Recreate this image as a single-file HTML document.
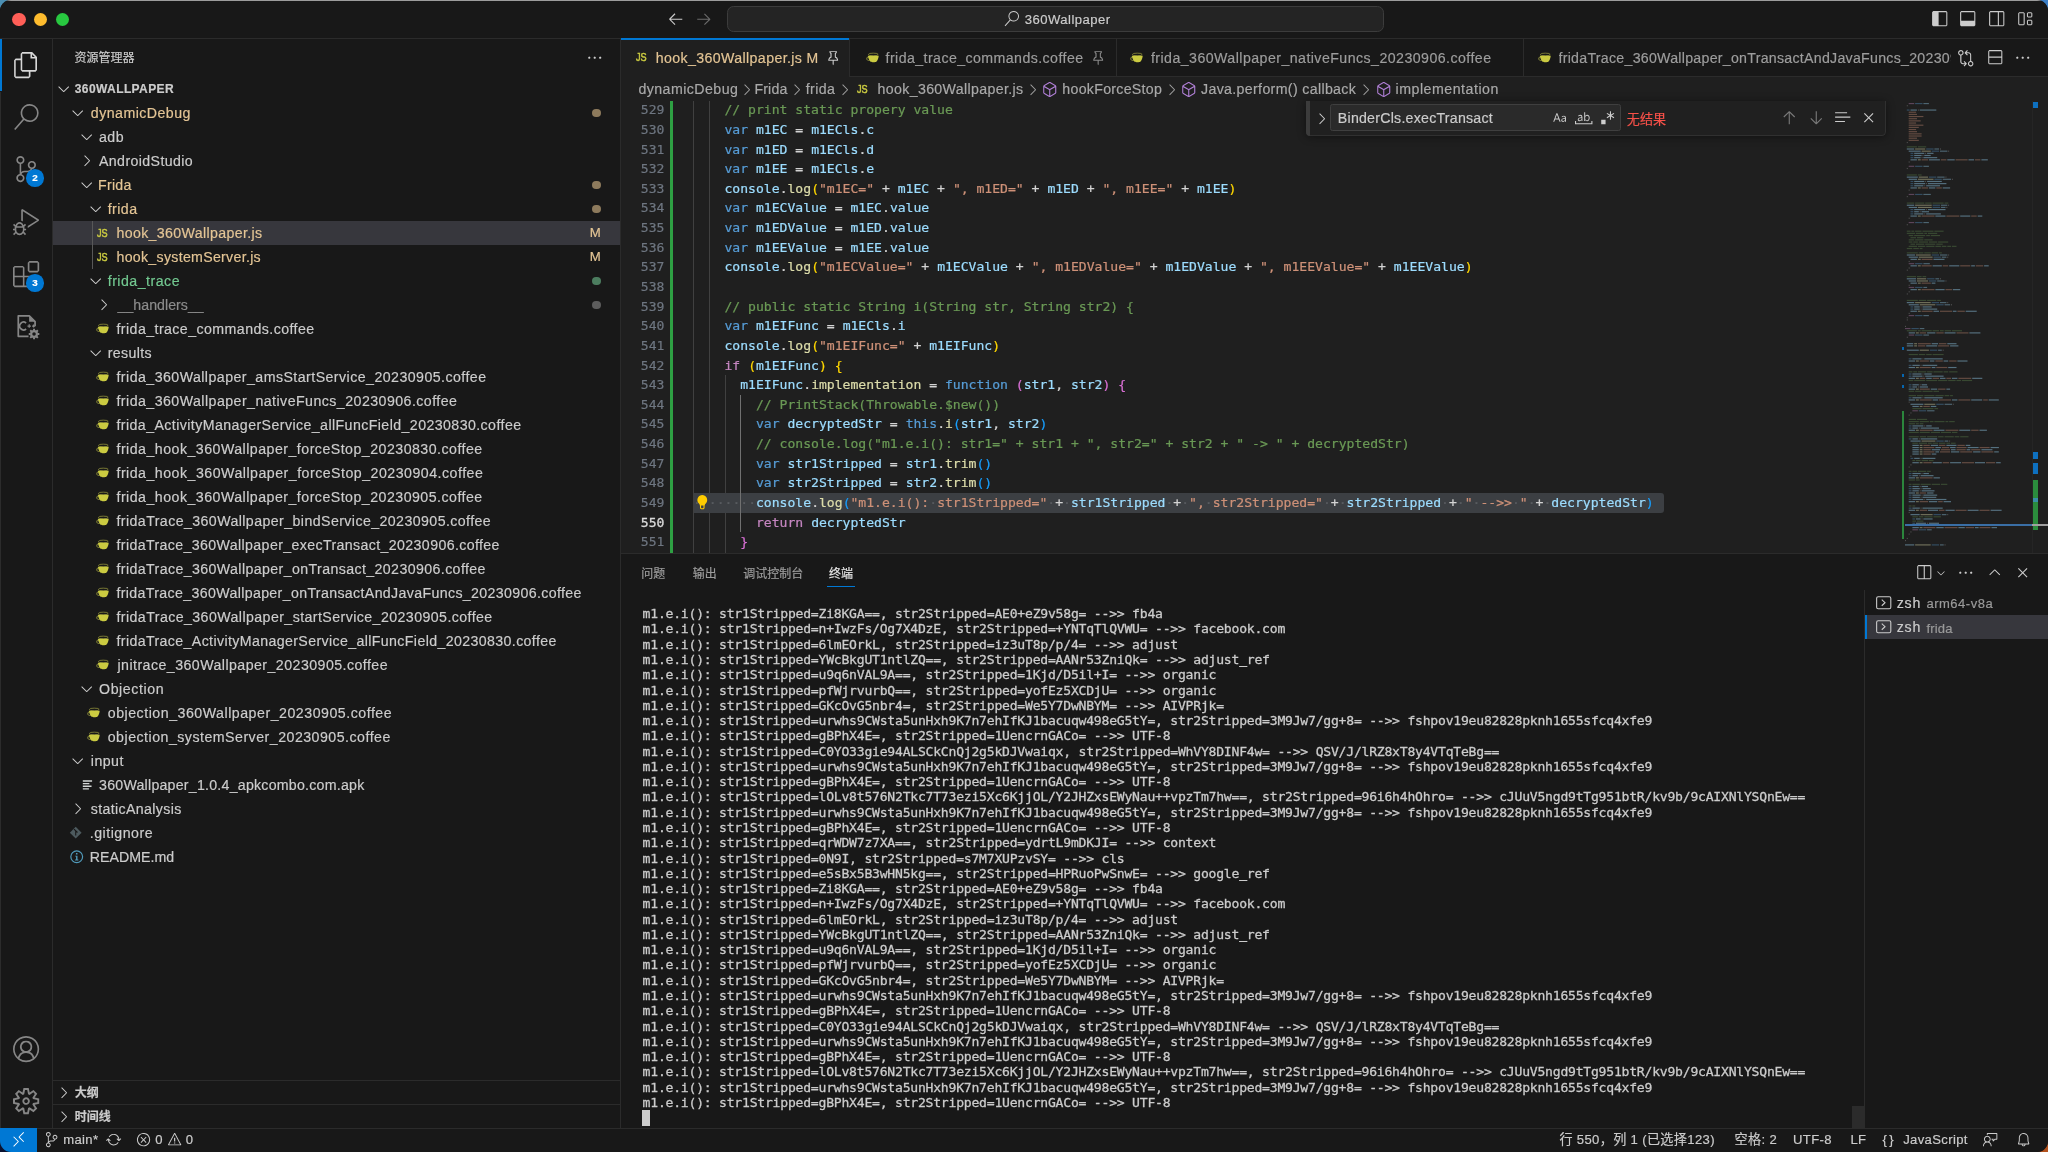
<!DOCTYPE html>
<html lang="zh-CN"><head><meta charset="utf-8"><title>hook_360Wallpaper.js — 360Wallpaper</title>
<style>
*{box-sizing:border-box;margin:0;padding:0}
html,body{width:2048px;height:1152px;overflow:hidden;background:#181818}
body{font-family:"Liberation Sans","Noto Sans CJK SC",sans-serif;font-size:14.18px;color:#ccc;
  -webkit-font-smoothing:antialiased;position:relative}
#win{will-change:transform;position:absolute;left:0;top:0;width:2048px;height:1152px;background:#181818;overflow:hidden;border-radius:11px}
.b,.t,.ic,.r{position:absolute}
.t{white-space:pre;letter-spacing:.36px;-webkit-text-stroke:.18px}
.ic{display:block;overflow:visible}
.cjk{font-family:"Noto Sans CJK SC","Liberation Sans",sans-serif;letter-spacing:0}
.bold{font-weight:700}
.mono{font-family:"DejaVu Sans Mono","Liberation Mono",monospace;letter-spacing:0}
.jsi{font-weight:400;letter-spacing:-.2px;font-family:"Liberation Sans",sans-serif;-webkit-text-stroke:.55px;transform:scaleX(.8);transform-origin:0 50%}
.corner{position:absolute;width:14px;height:14px}
/* code tokens */
.c{color:#6a9955}.k{color:#569cd6}.v{color:#9cdcfe}.f{color:#dcdcaa}.s{color:#ce9178}.p{color:#d4d4d4}
.kc{color:#c586c0}.b1{color:#ffd700}.b2{color:#da70d6}.b3{color:#179fff}.ws{color:#585b5f}
.ln{-webkit-text-stroke:.18px;position:absolute;left:621px;width:43.4px;text-align:right;color:#6e7681;font-family:"DejaVu Sans Mono","Liberation Mono",monospace;font-size:13.09px;line-height:19.636px;height:19.636px}
.cl{position:absolute;left:693px;-webkit-text-stroke:.22px;white-space:pre;font-family:"DejaVu Sans Mono","Liberation Mono",monospace;font-size:13.09px;line-height:19.636px;height:19.636px;color:#d4d4d4}
.tl{position:absolute;left:642.6px;-webkit-text-stroke:.28px #ccc;white-space:pre;font-family:"DejaVu Sans Mono","Liberation Mono",monospace;font-size:13.09px;letter-spacing:-.2255px;line-height:15.273px;height:15.273px;color:#ccc}
</style></head>
<body>
<div class="corner" style="left:0;top:0;background:#4b8fb3"></div><div class="corner" style="right:0;top:0;background:#3c7fc6"></div><div class="corner" style="left:0;bottom:0;background:#0b1230"></div><div class="corner" style="right:0;bottom:0;background:#b4521d"></div>
<div id="win">
<!-- title bar -->
<div class="b" style="left:0.00px;top:0.00px;width:2048.00px;height:38.00px;background:#181818;"></div>
<div class="b" style="left:0.00px;top:0.00px;width:2048.00px;height:1.00px;background:#9c9c9c;"></div>
<div class="b" style="left:0.00px;top:37.60px;width:2048.00px;height:1.10px;background:#2b2b2b;"></div>
<div class="b" style="left:12.00px;top:12.95px;width:13.50px;height:13.50px;background:#ff5f57;border-radius:50%"></div>
<div class="b" style="left:33.85px;top:12.95px;width:13.50px;height:13.50px;background:#febc2e;border-radius:50%"></div>
<div class="b" style="left:55.75px;top:12.95px;width:13.50px;height:13.50px;background:#28c840;border-radius:50%"></div>
<svg class="ic" style="left:666.88px;top:10.17px;width:17.45px;height:17.45px;" viewBox="0 0 16 16"><path fill="#cccccc" d="M6.99 3.09 2.03 8.11V8.8L6.99 13.81L7.73 13.07L3.57 8.96H14.03V7.95H3.57L7.73 3.79Z"/></svg>
<svg class="ic" style="left:695.07px;top:10.17px;width:17.45px;height:17.45px;" viewBox="0 0 16 16"><path fill="#6b6b6b" d="M9.01 13.87 14.03 8.91V8.16L9.01 3.2L8.27 3.89L12.43 8.05H2.03V9.01H12.43L8.27 13.17Z"/></svg>
<div class="b" style="left:727.30px;top:5.80px;width:656.30px;height:26.00px;background:#242424;border:1px solid #3c3c3c;border-radius:6.5px"></div>
<svg class="ic" style="left:1004.35px;top:11.25px;width:15.30px;height:15.30px;" viewBox="0 0 16 16"><path fill="#cccccc" d="M10.19 0Q8.53 0 7.17 0.88Q5.81 1.76 5.15 3.25Q4.48 4.75 4.72 6.35Q4.96 7.95 6.03 9.12L0.69 15.25L1.44 15.89L6.77 9.81Q8.21 10.93 10 10.99Q11.79 11.04 13.28 10.03Q14.77 9.01 15.36 7.31Q15.95 5.6 15.41 3.87Q14.88 2.13 13.41 1.07Q11.95 0 10.19 0ZM10.19 9.97Q8.96 9.97 7.92 9.39Q6.88 8.8 6.27 7.76Q5.65 6.72 5.65 5.49Q5.65 4.27 6.27 3.23Q6.88 2.19 7.92 1.6Q8.96 1.01 10.19 1.01Q11.41 1.01 12.43 1.6Q13.44 2.19 14.05 3.23Q14.67 4.27 14.67 5.49Q14.67 6.72 14.05 7.76Q13.44 8.8 12.43 9.41Q11.41 10.03 10.19 10.03Z"/></svg>
<div class="t " style="left:1024.80px;top:9.58px;font-size:13.09px;line-height:19.63px;color:#cccccc;letter-spacing:0.468px;">360Wallpaper</div>
<svg class="ic" style="left:1930.78px;top:10.08px;width:17.45px;height:17.45px;" viewBox="0 0 16 16"><path fill="#cccccc" d="M2.03 1.01 1.01 1.97V13.97L2.03 14.99H14.03L14.99 13.97V1.97L14.03 1.01ZM14.03 13.97H6.99V1.97H14.03Z"/></svg>
<svg class="ic" style="left:1959.28px;top:10.08px;width:17.45px;height:17.45px;" viewBox="0 0 16 16"><path fill="#cccccc" d="M2.03 1.01 1.01 1.97V13.97L2.03 14.99H14.03L14.99 13.97V1.97L14.03 1.01ZM2.03 9.97V1.97H14.03V9.97Z"/></svg>
<svg class="ic" style="left:1987.68px;top:10.08px;width:17.45px;height:17.45px;" viewBox="0 0 16 16"><path fill="#cccccc" d="M2.03 1.01 1.01 2.03V14.03L2.03 14.99H14.03L14.99 14.03V2.03L14.03 1.01ZM2.03 14.03V2.03H9.01V14.03ZM10.03 14.03V2.03H14.03V14.03Z"/></svg>
<svg class="ic" style="left:2015.88px;top:10.08px;width:17.45px;height:17.45px;" viewBox="0 0 16 16"><path fill="#cccccc" d="M2.99 1.97 2.03 2.99V13.01L2.99 13.97H6.99L8 13.01V2.99L6.99 1.97ZM2.99 13.01V2.99H6.99V13.01ZM10.03 2.99 10.99 1.97H14.03L14.99 2.99V5.97L14.03 6.99H10.99L10.03 5.97ZM10.99 2.99V5.97H14.03V2.99ZM10.03 9.97 10.99 9.01H14.03L14.99 9.97V13.01L14.03 13.97H10.99L10.03 13.01ZM10.99 9.97V13.01H14.03V9.97Z"/></svg>
<!-- activity bar -->
<div class="b" style="left:0.00px;top:38.70px;width:52.40px;height:1089.50px;background:#181818;"></div>
<div class="b" style="left:51.90px;top:38.70px;width:1.00px;height:1089.50px;background:#2b2b2b;"></div>
<div class="b" style="left:0.00px;top:38.70px;width:2.40px;height:52.40px;background:#0078d4;"></div>
<svg class="ic" style="left:13.10px;top:51.50px;width:26.20px;height:26.20px;" viewBox="0 0 16 16"><path fill="#d7d7d7" d="M11.68 0H5.65L4.69 1.01V4H1.65L0.69 5.01V15.04L1.65 16H9.71L10.67 15.04V12H13.81L14.67 11.04V2.99ZM11.68 1.39 13.28 2.99H11.68ZM9.65 14.99H1.65V5.01H4.69V11.04L5.65 12H9.65ZM13.65 10.99H5.65V1.01H10.67V4H13.65Z"/></svg>
<svg class="ic" style="left:13.10px;top:103.90px;width:26.20px;height:26.20px;" viewBox="0 0 16 16"><path fill="#868686" d="M10.19 0Q8.53 0 7.17 0.88Q5.81 1.76 5.15 3.25Q4.48 4.75 4.72 6.35Q4.96 7.95 6.03 9.12L0.69 15.25L1.44 15.89L6.77 9.81Q8.21 10.93 10 10.99Q11.79 11.04 13.28 10.03Q14.77 9.01 15.36 7.31Q15.95 5.6 15.41 3.87Q14.88 2.13 13.41 1.07Q11.95 0 10.19 0ZM10.19 9.97Q8.96 9.97 7.92 9.39Q6.88 8.8 6.27 7.76Q5.65 6.72 5.65 5.49Q5.65 4.27 6.27 3.23Q6.88 2.19 7.92 1.6Q8.96 1.01 10.19 1.01Q11.41 1.01 12.43 1.6Q13.44 2.19 14.05 3.23Q14.67 4.27 14.67 5.49Q14.67 6.72 14.05 7.76Q13.44 8.8 12.43 9.41Q11.41 10.03 10.19 10.03Z"/></svg>
<svg class="ic" style="left:13.10px;top:156.30px;width:26.20px;height:26.20px;" viewBox="0 0 16 16"><path fill="#868686" d="M14.03 5.49Q14.03 4.8 13.65 4.19Q13.28 3.57 12.64 3.25Q12 2.93 11.31 2.99Q10.61 3.04 10.03 3.47Q9.44 3.89 9.2 4.56Q8.96 5.23 9.07 5.92Q9.17 6.61 9.65 7.12Q10.13 7.63 10.83 7.84Q10.56 8.37 10.08 8.67Q9.6 8.96 9.01 8.96H7.04Q5.87 8.96 5.01 9.76V4.91Q5.97 4.75 6.53 3.97Q7.09 3.2 7.01 2.24Q6.93 1.28 6.21 0.64Q5.49 0 4.53 0Q3.57 0 2.85 0.64Q2.13 1.28 2.05 2.24Q1.97 3.2 2.53 3.97Q3.09 4.75 4.05 4.91V10.99Q3.09 11.2 2.51 11.95Q1.92 12.69 2 13.65Q2.08 14.61 2.75 15.28Q3.41 15.95 4.37 16Q5.33 16.05 6.08 15.47Q6.83 14.88 6.99 13.92Q7.15 12.96 6.67 12.16Q6.19 11.36 5.23 11.09Q5.49 10.56 5.97 10.27Q6.45 9.97 7.04 9.97H9.01Q9.97 9.97 10.75 9.41Q11.52 8.85 11.84 7.95Q12.75 7.84 13.39 7.12Q14.03 6.4 14.03 5.49ZM3.04 2.51Q3.04 1.87 3.47 1.44Q3.89 1.01 4.53 1.01Q5.17 1.01 5.6 1.44Q6.03 1.87 6.03 2.48Q6.03 3.09 5.6 3.55Q5.17 4 4.53 4Q3.89 4 3.47 3.55Q3.04 3.09 3.04 2.51ZM6.03 13.44Q6.03 14.08 5.6 14.51Q5.17 14.93 4.53 14.93Q3.89 14.93 3.47 14.51Q3.04 14.08 3.04 13.47Q3.04 12.85 3.47 12.4Q3.89 11.95 4.53 11.95Q5.17 11.95 5.6 12.4Q6.03 12.85 6.03 13.44ZM11.52 6.99Q10.88 6.99 10.45 6.53Q10.03 6.08 10.03 5.47Q10.03 4.85 10.45 4.43Q10.88 4 11.49 4Q12.11 4 12.56 4.43Q13.01 4.85 13.01 5.47Q13.01 6.08 12.56 6.53Q12.11 6.99 11.52 6.99Z"/></svg>
<svg class="ic" style="left:13.10px;top:208.70px;width:26.20px;height:26.20px;" viewBox="0 0 16 16"><path fill="#868686" d="M7.31 9.01 6.4 9.87Q6.19 9.07 5.52 8.53Q4.85 8 4 8Q3.15 8 2.48 8.53Q1.81 9.07 1.6 9.87L0.69 9.01L0 9.71L1.17 10.83L1.01 10.99V12H0V13.01H1.01V13.07Q1.07 13.55 1.28 14.03L0 15.31L0.69 16L1.81 14.88Q2.19 15.41 2.77 15.71Q3.36 16 4 16Q4.64 16 5.23 15.71Q5.81 15.41 6.19 14.88L7.31 16L8 15.31L6.72 13.97Q6.93 13.55 6.99 13.01V12.96H8V12H6.99V10.99L6.88 10.83L8 9.71ZM4 9.01Q4.64 9.01 5.07 9.44Q5.49 9.87 5.49 10.51H2.51Q2.51 9.87 2.93 9.44Q3.36 9.01 4 9.01ZM6.03 13.01Q5.92 13.81 5.36 14.37Q4.8 14.93 4 14.99Q3.2 14.93 2.64 14.37Q2.08 13.81 2.03 13.01V11.52H6.03ZM15.84 6.4V7.25L9.01 11.57V10.4L14.67 6.83L6.03 1.33V7.63Q5.55 7.31 5.01 7.15V0.43L5.76 0Z"/></svg>
<svg class="ic" style="left:13.10px;top:261.10px;width:26.20px;height:26.20px;" viewBox="0 0 16 16"><path fill="#868686" d="M9.01 1.01 10.03 0H14.99L16 1.01V5.97L14.99 6.99H10.03L9.01 5.97ZM10.03 1.01V5.97H14.99V1.01ZM0 9.97V4L1.01 2.99H6.03L6.99 4V9.01H12L13.01 9.97V14.99L12 16H1.01L0 14.99ZM6.03 9.01V4H1.01V9.01ZM6.03 9.97H1.01V14.99H6.03ZM6.99 14.99H12V9.97H6.99Z"/></svg>
<svg class="ic" style="left:13.4px;top:311.6px;width:27.6px;height:27.6px" viewBox="0 0 24 24"><path fill="none" stroke="#868686" stroke-width="1.5" stroke-linejoin="round" d="M13.5 21.2H4.6V3.3h9.6l5 5v4.2"/><path fill="#868686" d="M14 3.5v5h5z"/><path fill="none" stroke="#868686" stroke-width="1.5" d="M11.4 9.6a3.4 3.4 0 1 0 0 5.2"/><path fill="none" stroke="#868686" stroke-width="1.1" d="M12.6 12.2h3M14.1 10.7v3M16.6 12.2h2.6M17.9 10.9v2.6"/><circle cx="18.3" cy="19.2" r="2.5" fill="none" stroke="#868686" stroke-width="1.9"/><path fill="none" stroke="#868686" stroke-width="1.7" d="M18.3 14.6v1.7M18.3 22.1v1.7M13.7 19.2h1.7M21.2 19.2h1.7M15 15.9l1.2 1.2M20.4 21.3l1.2 1.2M15 22.5l1.2-1.2M20.4 17.1l1.2-1.2"/></svg>
<div class="b" style="left:26.40px;top:169.40px;width:17.60px;height:17.60px;background:#0078d4;border-radius:50%"></div>
<div class="t bold" style="left:32.30px;top:171.05px;font-size:9.8px;line-height:14.7px;color:#ffffff;letter-spacing:0px;">2</div>
<div class="b" style="left:26.40px;top:274.10px;width:17.60px;height:17.60px;background:#0078d4;border-radius:50%"></div>
<div class="t bold" style="left:32.30px;top:275.75px;font-size:9.8px;line-height:14.7px;color:#ffffff;letter-spacing:0px;">3</div>
<svg class="ic" style="left:13.40px;top:1036.10px;width:26.20px;height:26.20px;" viewBox="0 0 16 16"><path fill="#868686" d="M16 8Q16 5.81 14.93 3.97Q13.87 2.13 12.03 1.07Q10.19 0 8 0Q5.81 0 3.97 1.07Q2.13 2.13 1.07 3.97Q0 5.81 0 8Q0 9.76 0.75 11.36Q1.49 12.96 2.83 14.08L3.52 14.61Q5.55 16 8 16Q10.45 16 12.48 14.61L13.23 14.08Q14.51 12.96 15.25 11.36Q16 9.76 16 8ZM8 14.99Q5.81 14.99 4 13.71L4.05 13.33Q4.21 12.8 4.48 12.35Q4.75 11.89 5.12 11.52Q5.49 11.15 5.92 10.88Q6.35 10.61 6.91 10.48Q7.47 10.35 8 10.35Q8.8 10.35 9.57 10.64Q10.35 10.93 10.91 11.49Q11.47 12.05 11.79 12.8Q11.95 13.23 12.05 13.71Q10.24 14.99 8 14.99ZM5.55 7.57Q5.33 7.09 5.33 6.56Q5.33 6.03 5.55 5.55Q5.76 5.07 6.11 4.72Q6.45 4.37 6.93 4.13Q7.41 3.89 8 3.89Q8.59 3.89 9.04 4.11Q9.49 4.32 9.87 4.69Q10.24 5.07 10.45 5.55Q10.67 6.03 10.67 6.59Q10.67 7.15 10.45 7.6Q10.24 8.05 9.87 8.43Q9.49 8.8 9.01 9.01Q8 9.44 6.93 9.01Q6.51 8.8 6.13 8.43Q5.76 8.05 5.55 7.57ZM12.96 12.91Q12.96 12.91 12.96 12.85V12.8Q12.75 12.05 12.29 11.41Q11.84 10.77 11.2 10.29Q10.72 9.92 10.13 9.65Q10.4 9.49 10.61 9.28Q10.99 8.91 11.25 8.48Q11.79 7.63 11.73 6.56Q11.79 5.81 11.49 5.12Q11.2 4.43 10.67 3.89Q10.13 3.36 9.44 3.09Q8.75 2.83 7.97 2.83Q7.2 2.83 6.51 3.09Q5.81 3.36 5.31 3.89Q4.8 4.43 4.51 5.12Q4.21 5.81 4.21 6.56Q4.21 7.09 4.37 7.6Q4.53 8.11 4.75 8.48Q4.96 8.85 5.39 9.28Q5.6 9.49 5.87 9.71Q5.33 9.92 4.85 10.29Q4.21 10.77 3.76 11.41Q3.31 12.05 3.04 12.85V12.91Q2.08 11.95 1.55 10.67Q1.01 9.39 1.01 8Q1.01 6.08 1.95 4.48Q2.88 2.88 4.48 1.95Q6.08 1.01 8 1.01Q9.92 1.01 11.52 1.95Q13.12 2.88 14.05 4.48Q14.99 6.08 14.99 8Q14.99 9.39 14.48 10.67Q13.97 11.95 12.96 12.91Z"/></svg>
<svg class="ic" style="left:13.40px;top:1088.20px;width:26.20px;height:26.20px;" viewBox="0 0 16 16"><path fill="#868686" d="M13.23 5.81 16 6.4V9.6L13.23 10.19L14.83 12.53L12.53 14.77L10.19 13.23L9.6 16H6.4L5.81 13.23L3.47 14.83L1.23 12.53L2.77 10.19L0 9.6V6.4L2.77 5.81L1.23 3.47L3.47 1.17L5.81 2.77L6.4 0H9.6L10.19 2.77L12.53 1.17L14.83 3.47ZM12.21 9.23 14.88 8.69V7.36L12.21 6.77L11.84 5.92L13.33 3.63L12.43 2.67L10.13 4.21L9.23 3.84L8.69 1.17H7.36L6.83 3.84L5.97 4.21L3.68 2.67L2.72 3.63L4.27 5.92L3.89 6.77L1.23 7.36V8.69L3.89 9.23L4.27 10.08L2.72 12.37L3.68 13.33L5.97 11.79L6.83 12.16L7.36 14.83H8.69L9.23 12.16L10.13 11.79L12.43 13.33L13.33 12.37L11.84 10.08ZM6.72 6.08Q7.31 5.71 8 5.71Q8.96 5.71 9.63 6.37Q10.29 7.04 10.29 8Q10.29 8.8 9.76 9.44Q9.23 10.08 8.43 10.24Q7.63 10.4 6.91 10.03Q6.19 9.65 5.89 8.88Q5.6 8.11 5.81 7.33Q6.03 6.56 6.72 6.08ZM7.36 8.96Q7.68 9.12 8 9.12Q8.48 9.12 8.8 8.8Q9.12 8.48 9.12 8.03Q9.12 7.57 8.88 7.28Q8.64 6.99 8.24 6.91Q7.84 6.83 7.47 7.01Q7.09 7.2 6.93 7.57Q6.77 7.95 6.91 8.35Q7.04 8.75 7.36 8.96Z"/></svg>
<!-- explorer side bar -->
<div class="b" style="left:52.90px;top:38.70px;width:567.00px;height:1089.50px;background:#181818;"></div>
<div class="b" style="left:619.60px;top:38.70px;width:1.00px;height:1089.50px;background:#2b2b2b;"></div>
<div class="t cjk" style="left:74.60px;top:48.40px;font-size:12px;line-height:18.0px;color:#cccccc;">资源管理器</div>
<svg class="ic" style="left:585.67px;top:48.88px;width:17.45px;height:17.45px;" viewBox="0 0 16 16"><path fill="#cccccc" d="M4 8Q4 8.43 3.71 8.72Q3.41 9.01 2.99 9.01Q2.56 9.01 2.29 8.72Q2.03 8.43 2.03 8Q2.03 7.57 2.29 7.28Q2.56 6.99 2.99 6.99Q3.41 6.99 3.71 7.28Q4 7.57 4 8ZM9.01 8Q9.01 8.43 8.72 8.72Q8.43 9.01 8 9.01Q7.57 9.01 7.28 8.72Q6.99 8.43 6.99 8Q6.99 7.57 7.28 7.28Q7.57 6.99 8 6.99Q8.43 6.99 8.72 7.28Q9.01 7.57 9.01 8ZM14.03 8Q14.03 8.43 13.73 8.72Q13.44 9.01 13.01 9.01Q12.59 9.01 12.29 8.72Q12 8.43 12 8Q12 7.57 12.29 7.28Q12.59 6.99 13.01 6.99Q13.44 6.99 13.73 7.28Q14.03 7.57 14.03 8Z"/></svg>
<svg class="ic" style="left:55.07px;top:79.88px;width:17.45px;height:17.45px;" viewBox="0 0 16 16"><path fill="#cccccc" d="M8 10.08 12.32 5.71 12.96 6.35 8.27 10.99H7.68L2.99 6.35L3.63 5.71Z"/></svg>
<div class="t bold" style="left:74.80px;top:79.60px;font-size:12px;line-height:18.0px;color:#cccccc;letter-spacing:0.4px;">360WALLPAPER</div>
<svg class="ic" style="left:69.28px;top:103.78px;width:17.45px;height:17.45px;" viewBox="0 0 16 16"><path fill="#cccccc" d="M8 10.08 12.32 5.71 12.96 6.35 8.27 10.99H7.68L2.99 6.35L3.63 5.71Z"/></svg>
<div class="t " style="left:90.80px;top:102.86px;font-size:14.18px;line-height:21.27px;color:#e4c595;letter-spacing:0.464px;">dynamicDebug</div>
<div class="b" style="left:592.00px;top:108.90px;width:8.60px;height:8.60px;background:#8d7a5c;border-radius:50%"></div>
<svg class="ic" style="left:78.00px;top:127.78px;width:17.45px;height:17.45px;" viewBox="0 0 16 16"><path fill="#cccccc" d="M8 10.08 12.32 5.71 12.96 6.35 8.27 10.99H7.68L2.99 6.35L3.63 5.71Z"/></svg>
<div class="t " style="left:99.03px;top:126.86px;font-size:14.18px;line-height:21.27px;color:#cccccc;letter-spacing:0.468px;">adb</div>
<svg class="ic" style="left:78.00px;top:151.78px;width:17.45px;height:17.45px;" viewBox="0 0 16 16"><path fill="#cccccc" d="M10.08 8 5.71 3.68 6.35 3.04 10.99 7.73V8.32L6.35 13.01L5.71 12.37Z"/></svg>
<div class="t " style="left:99.03px;top:150.87px;font-size:14.18px;line-height:21.27px;color:#cccccc;letter-spacing:0.383px;">AndroidStudio</div>
<svg class="ic" style="left:78.00px;top:175.78px;width:17.45px;height:17.45px;" viewBox="0 0 16 16"><path fill="#cccccc" d="M8 10.08 12.32 5.71 12.96 6.35 8.27 10.99H7.68L2.99 6.35L3.63 5.71Z"/></svg>
<div class="t " style="left:98.03px;top:174.87px;font-size:14.18px;line-height:21.27px;color:#e4c595;letter-spacing:0.273px;">Frida</div>
<div class="b" style="left:592.00px;top:180.90px;width:8.60px;height:8.60px;background:#8d7a5c;border-radius:50%"></div>
<svg class="ic" style="left:86.73px;top:199.78px;width:17.45px;height:17.45px;" viewBox="0 0 16 16"><path fill="#cccccc" d="M8 10.08 12.32 5.71 12.96 6.35 8.27 10.99H7.68L2.99 6.35L3.63 5.71Z"/></svg>
<div class="t " style="left:107.75px;top:198.87px;font-size:14.18px;line-height:21.27px;color:#e4c595;letter-spacing:0.428px;">frida</div>
<div class="b" style="left:592.00px;top:204.90px;width:8.60px;height:8.60px;background:#8d7a5c;border-radius:50%"></div>
<div class="b" style="left:52.90px;top:221.00px;width:566.70px;height:24.00px;background:#37373d;"></div>
<div class="t jsi" style="left:97.08px;top:224.85px;font-size:11.4px;line-height:17.1px;color:#cbcb41;">JS</div>
<div class="t " style="left:116.48px;top:222.87px;font-size:14.18px;line-height:21.27px;color:#e4c595;letter-spacing:0.356px;">hook_360Wallpaper.js</div>
<div class="t " style="left:589.80px;top:223.30px;font-size:13.2px;line-height:19.8px;color:#e4c595;letter-spacing:0px;">M</div>
<div class="t jsi" style="left:97.08px;top:248.85px;font-size:11.4px;line-height:17.1px;color:#cbcb41;">JS</div>
<div class="t " style="left:116.48px;top:246.87px;font-size:14.18px;line-height:21.27px;color:#e4c595;letter-spacing:0.293px;">hook_systemServer.js</div>
<div class="t " style="left:589.80px;top:247.30px;font-size:13.2px;line-height:19.8px;color:#e4c595;letter-spacing:0px;">M</div>
<svg class="ic" style="left:86.73px;top:271.77px;width:17.45px;height:17.45px;" viewBox="0 0 16 16"><path fill="#cccccc" d="M8 10.08 12.32 5.71 12.96 6.35 8.27 10.99H7.68L2.99 6.35L3.63 5.71Z"/></svg>
<div class="t " style="left:107.75px;top:270.87px;font-size:14.18px;line-height:21.27px;color:#73c991;letter-spacing:0.483px;">frida_trace</div>
<div class="b" style="left:592.00px;top:276.90px;width:8.60px;height:8.60px;background:#4c7d5f;border-radius:50%"></div>
<svg class="ic" style="left:95.46px;top:295.77px;width:17.45px;height:17.45px;" viewBox="0 0 16 16"><path fill="#cccccc" d="M10.08 8 5.71 3.68 6.35 3.04 10.99 7.73V8.32L6.35 13.01L5.71 12.37Z"/></svg>
<div class="t " style="left:117.48px;top:294.87px;font-size:14.18px;line-height:21.27px;color:#8c8c8c;letter-spacing:0.036px;">__handlers__</div>
<div class="b" style="left:592.00px;top:300.90px;width:8.60px;height:8.60px;background:#5c5c5c;border-radius:50%"></div>
<svg class="ic" style="left:94.05px;top:320.17px;width:17.45px;height:17.45px" viewBox="0 0 16 16"><ellipse cx="8.5" cy="5.0" rx="4.5" ry="1.2" fill="none" stroke="#8a8a3a" stroke-width=".75"/><path fill="none" stroke="#8f8f3c" stroke-width=".9" d="M4.3 7.2C2.5 6.9 1.9 9.5 3.3 10.3C4 10.7 4.9 10.6 5.4 10.1"/><path fill="#cbcb41" d="M3.6 6.2H13.5C13.4 8.5 12.4 10.6 11.3 11.7C10.8 12.3 6.6 12.3 6.1 11.7C5 10.6 3.7 8.5 3.6 6.2Z"/></svg>
<div class="t " style="left:116.48px;top:318.87px;font-size:14.18px;line-height:21.27px;color:#cccccc;letter-spacing:0.433px;">frida_trace_commands.coffee</div>
<svg class="ic" style="left:86.73px;top:343.77px;width:17.45px;height:17.45px;" viewBox="0 0 16 16"><path fill="#cccccc" d="M8 10.08 12.32 5.71 12.96 6.35 8.27 10.99H7.68L2.99 6.35L3.63 5.71Z"/></svg>
<div class="t " style="left:107.75px;top:342.87px;font-size:14.18px;line-height:21.27px;color:#cccccc;letter-spacing:0.349px;">results</div>
<svg class="ic" style="left:94.05px;top:368.17px;width:17.45px;height:17.45px" viewBox="0 0 16 16"><ellipse cx="8.5" cy="5.0" rx="4.5" ry="1.2" fill="none" stroke="#8a8a3a" stroke-width=".75"/><path fill="none" stroke="#8f8f3c" stroke-width=".9" d="M4.3 7.2C2.5 6.9 1.9 9.5 3.3 10.3C4 10.7 4.9 10.6 5.4 10.1"/><path fill="#cbcb41" d="M3.6 6.2H13.5C13.4 8.5 12.4 10.6 11.3 11.7C10.8 12.3 6.6 12.3 6.1 11.7C5 10.6 3.7 8.5 3.6 6.2Z"/></svg>
<div class="t " style="left:116.48px;top:366.87px;font-size:14.18px;line-height:21.27px;color:#cccccc;letter-spacing:0.452px;">frida_360Wallpaper_amsStartService_20230905.coffee</div>
<svg class="ic" style="left:94.05px;top:392.17px;width:17.45px;height:17.45px" viewBox="0 0 16 16"><ellipse cx="8.5" cy="5.0" rx="4.5" ry="1.2" fill="none" stroke="#8a8a3a" stroke-width=".75"/><path fill="none" stroke="#8f8f3c" stroke-width=".9" d="M4.3 7.2C2.5 6.9 1.9 9.5 3.3 10.3C4 10.7 4.9 10.6 5.4 10.1"/><path fill="#cbcb41" d="M3.6 6.2H13.5C13.4 8.5 12.4 10.6 11.3 11.7C10.8 12.3 6.6 12.3 6.1 11.7C5 10.6 3.7 8.5 3.6 6.2Z"/></svg>
<div class="t " style="left:116.48px;top:390.87px;font-size:14.18px;line-height:21.27px;color:#cccccc;letter-spacing:0.458px;">frida_360Wallpaper_nativeFuncs_20230906.coffee</div>
<svg class="ic" style="left:94.05px;top:416.17px;width:17.45px;height:17.45px" viewBox="0 0 16 16"><ellipse cx="8.5" cy="5.0" rx="4.5" ry="1.2" fill="none" stroke="#8a8a3a" stroke-width=".75"/><path fill="none" stroke="#8f8f3c" stroke-width=".9" d="M4.3 7.2C2.5 6.9 1.9 9.5 3.3 10.3C4 10.7 4.9 10.6 5.4 10.1"/><path fill="#cbcb41" d="M3.6 6.2H13.5C13.4 8.5 12.4 10.6 11.3 11.7C10.8 12.3 6.6 12.3 6.1 11.7C5 10.6 3.7 8.5 3.6 6.2Z"/></svg>
<div class="t " style="left:116.48px;top:414.87px;font-size:14.18px;line-height:21.27px;color:#cccccc;letter-spacing:0.421px;">frida_ActivityManagerService_allFuncField_20230830.coffee</div>
<svg class="ic" style="left:94.05px;top:440.17px;width:17.45px;height:17.45px" viewBox="0 0 16 16"><ellipse cx="8.5" cy="5.0" rx="4.5" ry="1.2" fill="none" stroke="#8a8a3a" stroke-width=".75"/><path fill="none" stroke="#8f8f3c" stroke-width=".9" d="M4.3 7.2C2.5 6.9 1.9 9.5 3.3 10.3C4 10.7 4.9 10.6 5.4 10.1"/><path fill="#cbcb41" d="M3.6 6.2H13.5C13.4 8.5 12.4 10.6 11.3 11.7C10.8 12.3 6.6 12.3 6.1 11.7C5 10.6 3.7 8.5 3.6 6.2Z"/></svg>
<div class="t " style="left:116.48px;top:438.87px;font-size:14.18px;line-height:21.27px;color:#cccccc;letter-spacing:0.48px;">frida_hook_360Wallpaper_forceStop_20230830.coffee</div>
<svg class="ic" style="left:94.05px;top:464.17px;width:17.45px;height:17.45px" viewBox="0 0 16 16"><ellipse cx="8.5" cy="5.0" rx="4.5" ry="1.2" fill="none" stroke="#8a8a3a" stroke-width=".75"/><path fill="none" stroke="#8f8f3c" stroke-width=".9" d="M4.3 7.2C2.5 6.9 1.9 9.5 3.3 10.3C4 10.7 4.9 10.6 5.4 10.1"/><path fill="#cbcb41" d="M3.6 6.2H13.5C13.4 8.5 12.4 10.6 11.3 11.7C10.8 12.3 6.6 12.3 6.1 11.7C5 10.6 3.7 8.5 3.6 6.2Z"/></svg>
<div class="t " style="left:116.48px;top:462.87px;font-size:14.18px;line-height:21.27px;color:#cccccc;letter-spacing:0.492px;">frida_hook_360Wallpaper_forceStop_20230904.coffee</div>
<svg class="ic" style="left:94.05px;top:488.17px;width:17.45px;height:17.45px" viewBox="0 0 16 16"><ellipse cx="8.5" cy="5.0" rx="4.5" ry="1.2" fill="none" stroke="#8a8a3a" stroke-width=".75"/><path fill="none" stroke="#8f8f3c" stroke-width=".9" d="M4.3 7.2C2.5 6.9 1.9 9.5 3.3 10.3C4 10.7 4.9 10.6 5.4 10.1"/><path fill="#cbcb41" d="M3.6 6.2H13.5C13.4 8.5 12.4 10.6 11.3 11.7C10.8 12.3 6.6 12.3 6.1 11.7C5 10.6 3.7 8.5 3.6 6.2Z"/></svg>
<div class="t " style="left:116.48px;top:486.87px;font-size:14.18px;line-height:21.27px;color:#cccccc;letter-spacing:0.48px;">frida_hook_360Wallpaper_forceStop_20230905.coffee</div>
<svg class="ic" style="left:94.05px;top:512.17px;width:17.45px;height:17.45px" viewBox="0 0 16 16"><ellipse cx="8.5" cy="5.0" rx="4.5" ry="1.2" fill="none" stroke="#8a8a3a" stroke-width=".75"/><path fill="none" stroke="#8f8f3c" stroke-width=".9" d="M4.3 7.2C2.5 6.9 1.9 9.5 3.3 10.3C4 10.7 4.9 10.6 5.4 10.1"/><path fill="#cbcb41" d="M3.6 6.2H13.5C13.4 8.5 12.4 10.6 11.3 11.7C10.8 12.3 6.6 12.3 6.1 11.7C5 10.6 3.7 8.5 3.6 6.2Z"/></svg>
<div class="t " style="left:116.48px;top:510.87px;font-size:14.18px;line-height:21.27px;color:#cccccc;letter-spacing:0.421px;">fridaTrace_360Wallpaper_bindService_20230905.coffee</div>
<svg class="ic" style="left:94.05px;top:536.17px;width:17.45px;height:17.45px" viewBox="0 0 16 16"><ellipse cx="8.5" cy="5.0" rx="4.5" ry="1.2" fill="none" stroke="#8a8a3a" stroke-width=".75"/><path fill="none" stroke="#8f8f3c" stroke-width=".9" d="M4.3 7.2C2.5 6.9 1.9 9.5 3.3 10.3C4 10.7 4.9 10.6 5.4 10.1"/><path fill="#cbcb41" d="M3.6 6.2H13.5C13.4 8.5 12.4 10.6 11.3 11.7C10.8 12.3 6.6 12.3 6.1 11.7C5 10.6 3.7 8.5 3.6 6.2Z"/></svg>
<div class="t " style="left:116.48px;top:534.87px;font-size:14.18px;line-height:21.27px;color:#cccccc;letter-spacing:0.378px;">fridaTrace_360Wallpaper_execTransact_20230906.coffee</div>
<svg class="ic" style="left:94.05px;top:560.17px;width:17.45px;height:17.45px" viewBox="0 0 16 16"><ellipse cx="8.5" cy="5.0" rx="4.5" ry="1.2" fill="none" stroke="#8a8a3a" stroke-width=".75"/><path fill="none" stroke="#8f8f3c" stroke-width=".9" d="M4.3 7.2C2.5 6.9 1.9 9.5 3.3 10.3C4 10.7 4.9 10.6 5.4 10.1"/><path fill="#cbcb41" d="M3.6 6.2H13.5C13.4 8.5 12.4 10.6 11.3 11.7C10.8 12.3 6.6 12.3 6.1 11.7C5 10.6 3.7 8.5 3.6 6.2Z"/></svg>
<div class="t " style="left:116.48px;top:558.87px;font-size:14.18px;line-height:21.27px;color:#cccccc;letter-spacing:0.397px;">fridaTrace_360Wallpaper_onTransact_20230906.coffee</div>
<svg class="ic" style="left:94.05px;top:584.17px;width:17.45px;height:17.45px" viewBox="0 0 16 16"><ellipse cx="8.5" cy="5.0" rx="4.5" ry="1.2" fill="none" stroke="#8a8a3a" stroke-width=".75"/><path fill="none" stroke="#8f8f3c" stroke-width=".9" d="M4.3 7.2C2.5 6.9 1.9 9.5 3.3 10.3C4 10.7 4.9 10.6 5.4 10.1"/><path fill="#cbcb41" d="M3.6 6.2H13.5C13.4 8.5 12.4 10.6 11.3 11.7C10.8 12.3 6.6 12.3 6.1 11.7C5 10.6 3.7 8.5 3.6 6.2Z"/></svg>
<div class="t " style="left:116.48px;top:582.87px;font-size:14.18px;line-height:21.27px;color:#cccccc;letter-spacing:0.354px;">fridaTrace_360Wallpaper_onTransactAndJavaFuncs_20230906.coffee</div>
<svg class="ic" style="left:94.05px;top:608.17px;width:17.45px;height:17.45px" viewBox="0 0 16 16"><ellipse cx="8.5" cy="5.0" rx="4.5" ry="1.2" fill="none" stroke="#8a8a3a" stroke-width=".75"/><path fill="none" stroke="#8f8f3c" stroke-width=".9" d="M4.3 7.2C2.5 6.9 1.9 9.5 3.3 10.3C4 10.7 4.9 10.6 5.4 10.1"/><path fill="#cbcb41" d="M3.6 6.2H13.5C13.4 8.5 12.4 10.6 11.3 11.7C10.8 12.3 6.6 12.3 6.1 11.7C5 10.6 3.7 8.5 3.6 6.2Z"/></svg>
<div class="t " style="left:116.48px;top:606.87px;font-size:14.18px;line-height:21.27px;color:#cccccc;letter-spacing:0.427px;">fridaTrace_360Wallpaper_startService_20230905.coffee</div>
<svg class="ic" style="left:94.05px;top:632.17px;width:17.45px;height:17.45px" viewBox="0 0 16 16"><ellipse cx="8.5" cy="5.0" rx="4.5" ry="1.2" fill="none" stroke="#8a8a3a" stroke-width=".75"/><path fill="none" stroke="#8f8f3c" stroke-width=".9" d="M4.3 7.2C2.5 6.9 1.9 9.5 3.3 10.3C4 10.7 4.9 10.6 5.4 10.1"/><path fill="#cbcb41" d="M3.6 6.2H13.5C13.4 8.5 12.4 10.6 11.3 11.7C10.8 12.3 6.6 12.3 6.1 11.7C5 10.6 3.7 8.5 3.6 6.2Z"/></svg>
<div class="t " style="left:116.48px;top:630.87px;font-size:14.18px;line-height:21.27px;color:#cccccc;letter-spacing:0.38px;">fridaTrace_ActivityManagerService_allFuncField_20230830.coffee</div>
<svg class="ic" style="left:94.05px;top:656.17px;width:17.45px;height:17.45px" viewBox="0 0 16 16"><ellipse cx="8.5" cy="5.0" rx="4.5" ry="1.2" fill="none" stroke="#8a8a3a" stroke-width=".75"/><path fill="none" stroke="#8f8f3c" stroke-width=".9" d="M4.3 7.2C2.5 6.9 1.9 9.5 3.3 10.3C4 10.7 4.9 10.6 5.4 10.1"/><path fill="#cbcb41" d="M3.6 6.2H13.5C13.4 8.5 12.4 10.6 11.3 11.7C10.8 12.3 6.6 12.3 6.1 11.7C5 10.6 3.7 8.5 3.6 6.2Z"/></svg>
<div class="t " style="left:117.48px;top:654.87px;font-size:14.18px;line-height:21.27px;color:#cccccc;letter-spacing:0.456px;">jnitrace_360Wallpaper_20230905.coffee</div>
<svg class="ic" style="left:78.00px;top:679.77px;width:17.45px;height:17.45px;" viewBox="0 0 16 16"><path fill="#cccccc" d="M8 10.08 12.32 5.71 12.96 6.35 8.27 10.99H7.68L2.99 6.35L3.63 5.71Z"/></svg>
<div class="t " style="left:99.03px;top:678.87px;font-size:14.18px;line-height:21.27px;color:#cccccc;letter-spacing:0.595px;">Objection</div>
<svg class="ic" style="left:85.33px;top:704.17px;width:17.45px;height:17.45px" viewBox="0 0 16 16"><ellipse cx="8.5" cy="5.0" rx="4.5" ry="1.2" fill="none" stroke="#8a8a3a" stroke-width=".75"/><path fill="none" stroke="#8f8f3c" stroke-width=".9" d="M4.3 7.2C2.5 6.9 1.9 9.5 3.3 10.3C4 10.7 4.9 10.6 5.4 10.1"/><path fill="#cbcb41" d="M3.6 6.2H13.5C13.4 8.5 12.4 10.6 11.3 11.7C10.8 12.3 6.6 12.3 6.1 11.7C5 10.6 3.7 8.5 3.6 6.2Z"/></svg>
<div class="t " style="left:107.75px;top:702.87px;font-size:14.18px;line-height:21.27px;color:#cccccc;letter-spacing:0.517px;">objection_360Wallpaper_20230905.coffee</div>
<svg class="ic" style="left:85.33px;top:728.17px;width:17.45px;height:17.45px" viewBox="0 0 16 16"><ellipse cx="8.5" cy="5.0" rx="4.5" ry="1.2" fill="none" stroke="#8a8a3a" stroke-width=".75"/><path fill="none" stroke="#8f8f3c" stroke-width=".9" d="M4.3 7.2C2.5 6.9 1.9 9.5 3.3 10.3C4 10.7 4.9 10.6 5.4 10.1"/><path fill="#cbcb41" d="M3.6 6.2H13.5C13.4 8.5 12.4 10.6 11.3 11.7C10.8 12.3 6.6 12.3 6.1 11.7C5 10.6 3.7 8.5 3.6 6.2Z"/></svg>
<div class="t " style="left:107.75px;top:726.87px;font-size:14.18px;line-height:21.27px;color:#cccccc;letter-spacing:0.49px;">objection_systemServer_20230905.coffee</div>
<svg class="ic" style="left:69.28px;top:751.77px;width:17.45px;height:17.45px;" viewBox="0 0 16 16"><path fill="#cccccc" d="M8 10.08 12.32 5.71 12.96 6.35 8.27 10.99H7.68L2.99 6.35L3.63 5.71Z"/></svg>
<div class="t " style="left:90.80px;top:750.87px;font-size:14.18px;line-height:21.27px;color:#cccccc;letter-spacing:0.452px;">input</div>
<svg class="ic" style="left:79.00px;top:776.47px;width:17.45px;height:17.45px" viewBox="0 0 16 16"><path fill="#d4d7d6" d="M3.5 4h8.5v1.2H3.5zM3.5 6.4h6v1.2h-6zM3.5 8.8h8v1.2h-8zM3.5 11.2h5.6v1.2H3.5z"/></svg>
<div class="t " style="left:99.03px;top:774.87px;font-size:14.18px;line-height:21.27px;color:#cccccc;letter-spacing:0.241px;">360Wallpaper_1.0.4_apkcombo.com.apk</div>
<svg class="ic" style="left:69.28px;top:799.77px;width:17.45px;height:17.45px;" viewBox="0 0 16 16"><path fill="#cccccc" d="M10.08 8 5.71 3.68 6.35 3.04 10.99 7.73V8.32L6.35 13.01L5.71 12.37Z"/></svg>
<div class="t " style="left:90.80px;top:798.87px;font-size:14.18px;line-height:21.27px;color:#cccccc;letter-spacing:0.357px;">staticAnalysis</div>
<svg class="ic" style="left:67.07px;top:824.47px;width:17.45px;height:17.45px" viewBox="0 0 16 16"><path fill="#4d5a5e" d="M8 2.6 13.4 8 8 13.4 2.6 8Z"/><path fill="none" stroke="#181818" stroke-width="1" d="M6.4 4.6 9.6 7.8M8 6.3V10.6"/></svg>
<div class="t " style="left:89.80px;top:822.87px;font-size:14.18px;line-height:21.27px;color:#cccccc;letter-spacing:0.498px;">.gitignore</div>
<svg class="ic" style="left:67.67px;top:848.47px;width:17.45px;height:17.45px" viewBox="0 0 16 16"><circle cx="8" cy="8" r="5.4" fill="none" stroke="#519aba" stroke-width="1.1"/><path fill="#519aba" d="M7.3 4.6h1.4v1.4H7.3zM6.6 7h2.1v3.6h.8v.9H6.5v-.9h.9V7.9h-.8z"/></svg>
<div class="t " style="left:89.80px;top:846.87px;font-size:14.18px;line-height:21.27px;color:#cccccc;letter-spacing:0.016px;">README.md</div>
<div class="b" style="left:92.30px;top:221.00px;width:1.00px;height:48.00px;background:#585858;"></div>
<div class="b" style="left:52.90px;top:1080.40px;width:566.70px;height:1.00px;background:#2b2b2b;"></div>
<svg class="ic" style="left:55.07px;top:1083.88px;width:17.45px;height:17.45px;" viewBox="0 0 16 16"><path fill="#cccccc" d="M10.08 8 5.71 3.68 6.35 3.04 10.99 7.73V8.32L6.35 13.01L5.71 12.37Z"/></svg>
<div class="t cjk bold" style="left:74.70px;top:1082.90px;font-size:12px;line-height:18.0px;color:#cccccc;">大纲</div>
<div class="b" style="left:52.90px;top:1104.40px;width:566.70px;height:1.00px;background:#2b2b2b;"></div>
<svg class="ic" style="left:55.07px;top:1107.88px;width:17.45px;height:17.45px;" viewBox="0 0 16 16"><path fill="#cccccc" d="M10.08 8 5.71 3.68 6.35 3.04 10.99 7.73V8.32L6.35 13.01L5.71 12.37Z"/></svg>
<div class="t cjk bold" style="left:74.70px;top:1106.90px;font-size:12px;line-height:18.0px;color:#cccccc;">时间线</div>
<!-- editor tabs -->
<div class="b" style="left:620.60px;top:38.70px;width:1427.40px;height:37.40px;background:#181818;"></div>
<div class="b" style="left:620.60px;top:75.60px;width:1427.40px;height:1.00px;background:#2b2b2b;"></div>
<div class="b" style="left:620.60px;top:38.70px;width:228.60px;height:38.20px;background:#1f1f1f;"></div>
<div class="b" style="left:620.60px;top:38.00px;width:228.60px;height:2.00px;background:#0078d4;"></div>
<div class="b" style="left:849.20px;top:38.70px;width:1.00px;height:37.40px;background:#2b2b2b;"></div>
<div class="b" style="left:1115.50px;top:38.70px;width:1.00px;height:37.40px;background:#2b2b2b;"></div>
<div class="b" style="left:1522.60px;top:38.70px;width:1.00px;height:37.40px;background:#2b2b2b;"></div>
<div class="t jsi" style="left:635.70px;top:49.35px;font-size:11.4px;line-height:17.1px;color:#cbcb41;">JS</div>
<div class="t " style="left:655.80px;top:47.66px;font-size:14.18px;line-height:21.27px;color:#e4c595;letter-spacing:0.377px;">hook_360Wallpaper.js</div>
<div class="t " style="left:806.60px;top:47.80px;font-size:14.0px;line-height:21.0px;color:#e4c595;letter-spacing:0px;">M</div>
<svg class="ic" style="left:825.07px;top:48.88px;width:17.45px;height:17.45px;" viewBox="0 0 16 16"><path fill="#cccccc" d="M4 1.97H10.99V2.29Q10.99 2.88 10.75 3.39Q10.51 3.89 9.97 4.27V7.15Q10.45 7.36 10.83 7.68Q11.2 8 11.47 8.4Q11.73 8.8 11.87 9.28Q12 9.76 12 10.29V10.77H8V13.97L7.52 14.99L6.99 13.97V10.77H2.99V10.29Q2.99 9.76 3.15 9.31Q3.31 8.85 3.52 8.43Q4.05 7.57 5.01 7.15V4.27Q4.53 3.89 4.27 3.39Q4 2.88 4 2.29ZM5.07 2.77Q5.17 2.99 5.23 3.09Q5.44 3.36 5.71 3.52L6.03 3.73V7.84L5.65 7.95Q5.07 8.16 4.64 8.64Q4.43 8.85 4.24 9.25Q4.05 9.65 4 9.97H10.99Q10.93 9.65 10.77 9.25Q10.61 8.85 10.4 8.64Q9.97 8.16 9.33 7.95L9.01 7.84V3.73L9.28 3.52Q9.44 3.47 9.55 3.36L9.76 3.09Q9.87 2.93 9.92 2.77Z"/></svg>
<svg class="ic" style="left:863.57px;top:48.87px;width:17.45px;height:17.45px" viewBox="0 0 16 16"><ellipse cx="8.5" cy="5.0" rx="4.5" ry="1.2" fill="none" stroke="#8a8a3a" stroke-width=".75"/><path fill="none" stroke="#8f8f3c" stroke-width=".9" d="M4.3 7.2C2.5 6.9 1.9 9.5 3.3 10.3C4 10.7 4.9 10.6 5.4 10.1"/><path fill="#cbcb41" d="M3.6 6.2H13.5C13.4 8.5 12.4 10.6 11.3 11.7C10.8 12.3 6.6 12.3 6.1 11.7C5 10.6 3.7 8.5 3.6 6.2Z"/></svg>
<div class="t " style="left:885.60px;top:47.66px;font-size:14.18px;line-height:21.27px;color:#9d9d9d;letter-spacing:0.425px;">frida_trace_commands.coffee</div>
<svg class="ic" style="left:1090.08px;top:48.88px;width:17.45px;height:17.45px;" viewBox="0 0 16 16"><path fill="#8a8a8a" d="M4 1.97H10.99V2.29Q10.99 2.88 10.75 3.39Q10.51 3.89 9.97 4.27V7.15Q10.45 7.36 10.83 7.68Q11.2 8 11.47 8.4Q11.73 8.8 11.87 9.28Q12 9.76 12 10.29V10.77H8V13.97L7.52 14.99L6.99 13.97V10.77H2.99V10.29Q2.99 9.76 3.15 9.31Q3.31 8.85 3.52 8.43Q4.05 7.57 5.01 7.15V4.27Q4.53 3.89 4.27 3.39Q4 2.88 4 2.29ZM5.07 2.77Q5.17 2.99 5.23 3.09Q5.44 3.36 5.71 3.52L6.03 3.73V7.84L5.65 7.95Q5.07 8.16 4.64 8.64Q4.43 8.85 4.24 9.25Q4.05 9.65 4 9.97H10.99Q10.93 9.65 10.77 9.25Q10.61 8.85 10.4 8.64Q9.97 8.16 9.33 7.95L9.01 7.84V3.73L9.28 3.52Q9.44 3.47 9.55 3.36L9.76 3.09Q9.87 2.93 9.92 2.77Z"/></svg>
<svg class="ic" style="left:1128.47px;top:48.87px;width:17.45px;height:17.45px" viewBox="0 0 16 16"><ellipse cx="8.5" cy="5.0" rx="4.5" ry="1.2" fill="none" stroke="#8a8a3a" stroke-width=".75"/><path fill="none" stroke="#8f8f3c" stroke-width=".9" d="M4.3 7.2C2.5 6.9 1.9 9.5 3.3 10.3C4 10.7 4.9 10.6 5.4 10.1"/><path fill="#cbcb41" d="M3.6 6.2H13.5C13.4 8.5 12.4 10.6 11.3 11.7C10.8 12.3 6.6 12.3 6.1 11.7C5 10.6 3.7 8.5 3.6 6.2Z"/></svg>
<div class="t " style="left:1150.90px;top:47.66px;font-size:14.18px;line-height:21.27px;color:#9d9d9d;letter-spacing:0.451px;">frida_360Wallpaper_nativeFuncs_20230906.coffee</div>
<svg class="ic" style="left:1535.67px;top:48.87px;width:17.45px;height:17.45px" viewBox="0 0 16 16"><ellipse cx="8.5" cy="5.0" rx="4.5" ry="1.2" fill="none" stroke="#8a8a3a" stroke-width=".75"/><path fill="none" stroke="#8f8f3c" stroke-width=".9" d="M4.3 7.2C2.5 6.9 1.9 9.5 3.3 10.3C4 10.7 4.9 10.6 5.4 10.1"/><path fill="#cbcb41" d="M3.6 6.2H13.5C13.4 8.5 12.4 10.6 11.3 11.7C10.8 12.3 6.6 12.3 6.1 11.7C5 10.6 3.7 8.5 3.6 6.2Z"/></svg>
<div class="t " style="left:1558.50px;top:47.66px;font-size:14.18px;line-height:21.27px;color:#9d9d9d;letter-spacing:0.271px;width:392.60px;overflow:hidden;">fridaTrace_360Wallpaper_onTransactAndJavaFuncs_20230906.coffee</div>
<svg class="ic" style="left:1957.18px;top:48.77px;width:17.45px;height:17.45px;" viewBox="0 0 16 16"><path fill="#cccccc" d="M7.41 13.01 6.13 11.73 6.77 11.04 8.91 13.17V13.87L6.77 16L6.08 15.25L7.36 13.97H5.49Q4.48 14.03 3.73 13.28Q2.99 12.53 2.99 11.52V5.97Q2.24 5.81 1.71 5.28Q1.17 4.75 1.04 4Q0.91 3.25 1.2 2.56Q1.49 1.87 2.11 1.44Q2.72 1.01 3.52 1.01Q4 1.01 4.48 1.17Q5.44 1.6 5.87 2.56Q6.03 3.04 6.03 3.52Q6.03 4.43 5.47 5.12Q4.91 5.81 4.05 5.97V11.47Q4.05 12.11 4.48 12.56Q4.91 13.01 5.55 13.01ZM2.72 4.75Q3.15 5.01 3.68 4.96Q4.21 4.91 4.59 4.53Q4.96 4.16 5.01 3.63Q5.07 3.09 4.8 2.69Q4.53 2.29 4.11 2.11Q3.68 1.92 3.25 2Q2.83 2.08 2.48 2.43Q2.13 2.77 2.05 3.2Q1.97 3.63 2.16 4.05Q2.35 4.48 2.72 4.75ZM13.01 11.04Q13.76 11.2 14.29 11.73Q14.93 12.37 15.01 13.25Q15.09 14.13 14.61 14.88Q14.19 15.52 13.49 15.81Q12.8 16.11 12.05 15.95Q11.31 15.79 10.77 15.25Q10.24 14.72 10.08 13.97Q9.92 13.23 10.21 12.53Q10.51 11.84 11.15 11.41Q11.57 11.15 12.05 11.04V5.49Q12.05 4.85 11.6 4.43Q11.15 4 10.56 4H8.69L9.97 5.28L9.23 5.97L7.09 3.84V3.15L9.23 1.01L9.97 1.71L8.69 2.99H10.56Q11.57 2.99 12.32 3.71Q13.07 4.43 13.01 5.49ZM12.69 14.99Q13.07 14.93 13.39 14.72Q13.71 14.51 13.89 14.13Q14.08 13.76 14.05 13.39Q14.03 13.01 13.79 12.64Q13.55 12.27 13.12 12.11Q12.69 11.95 12.24 12.03Q11.79 12.11 11.47 12.43Q11.15 12.75 11.07 13.2Q10.99 13.65 11.17 14.08Q11.36 14.51 11.79 14.77Q12.21 15.04 12.69 14.99Z"/></svg>
<svg class="ic" style="left:1986.28px;top:48.77px;width:17.45px;height:17.45px;" viewBox="0 0 16 16"><path fill="#cccccc" d="M14.03 1.01H2.99L2.03 1.97V13.01L2.99 13.97H14.03L14.99 13.01V1.97ZM14.03 13.01H2.99V8H14.03ZM14.03 6.99H2.99V1.97H14.03Z"/></svg>
<svg class="ic" style="left:2013.78px;top:48.77px;width:17.45px;height:17.45px;" viewBox="0 0 16 16"><path fill="#cccccc" d="M4 8Q4 8.43 3.71 8.72Q3.41 9.01 2.99 9.01Q2.56 9.01 2.29 8.72Q2.03 8.43 2.03 8Q2.03 7.57 2.29 7.28Q2.56 6.99 2.99 6.99Q3.41 6.99 3.71 7.28Q4 7.57 4 8ZM9.01 8Q9.01 8.43 8.72 8.72Q8.43 9.01 8 9.01Q7.57 9.01 7.28 8.72Q6.99 8.43 6.99 8Q6.99 7.57 7.28 7.28Q7.57 6.99 8 6.99Q8.43 6.99 8.72 7.28Q9.01 7.57 9.01 8ZM14.03 8Q14.03 8.43 13.73 8.72Q13.44 9.01 13.01 9.01Q12.59 9.01 12.29 8.72Q12 8.43 12 8Q12 7.57 12.29 7.28Q12.59 6.99 13.01 6.99Q13.44 6.99 13.73 7.28Q14.03 7.57 14.03 8Z"/></svg>
<!-- editor -->
<div class="b" style="left:620.60px;top:76.60px;width:1427.40px;height:476.80px;background:#1f1f1f;"></div>
<div class="t " style="left:638.40px;top:78.66px;font-size:14.18px;line-height:21.27px;color:#a9a9a9;letter-spacing:0.45px;">dynamicDebug</div>
<svg class="ic" style="left:737.67px;top:80.78px;width:17.45px;height:17.45px;" viewBox="0 0 16 16"><path fill="#a0a0a0" d="M10.08 8 5.71 3.68 6.35 3.04 10.99 7.73V8.32L6.35 13.01L5.71 12.37Z"/></svg>
<div class="t " style="left:754.50px;top:78.66px;font-size:14.18px;line-height:21.27px;color:#a9a9a9;letter-spacing:0.123px;">Frida</div>
<svg class="ic" style="left:788.27px;top:80.78px;width:17.45px;height:17.45px;" viewBox="0 0 16 16"><path fill="#a0a0a0" d="M10.08 8 5.71 3.68 6.35 3.04 10.99 7.73V8.32L6.35 13.01L5.71 12.37Z"/></svg>
<div class="t " style="left:805.70px;top:78.66px;font-size:14.18px;line-height:21.27px;color:#a9a9a9;letter-spacing:0.403px;">frida</div>
<svg class="ic" style="left:835.88px;top:80.78px;width:17.45px;height:17.45px;" viewBox="0 0 16 16"><path fill="#a0a0a0" d="M10.08 8 5.71 3.68 6.35 3.04 10.99 7.73V8.32L6.35 13.01L5.71 12.37Z"/></svg>
<div class="t jsi" style="left:857.30px;top:80.85px;font-size:11.4px;line-height:17.1px;color:#cbcb41;">JS</div>
<div class="t " style="left:877.50px;top:78.66px;font-size:14.18px;line-height:21.27px;color:#a9a9a9;letter-spacing:0.356px;">hook_360Wallpaper.js</div>
<svg class="ic" style="left:1024.28px;top:80.78px;width:17.45px;height:17.45px;" viewBox="0 0 16 16"><path fill="#a0a0a0" d="M10.08 8 5.71 3.68 6.35 3.04 10.99 7.73V8.32L6.35 13.01L5.71 12.37Z"/></svg>
<svg class="ic" style="left:1041.28px;top:80.58px;width:17.45px;height:17.45px;" viewBox="0 0 16 16"><path fill="#b180d7" d="M13.49 4 8.53 1.01H7.52L2.51 4L2.03 4.85V10.88L2.51 11.73L7.52 14.72H8.53L13.49 11.73L14.03 10.88V4.85ZM7.52 13.55 2.99 10.88V5.71L7.52 8.16ZM3.25 4.69 8 1.87 12.75 4.69 8 7.31ZM13.01 10.88 8.53 13.55V8.16L13.01 5.71Z"/></svg>
<div class="t " style="left:1062.30px;top:78.66px;font-size:14.18px;line-height:21.27px;color:#a9a9a9;letter-spacing:0.289px;">hookForceStop</div>
<svg class="ic" style="left:1162.68px;top:80.78px;width:17.45px;height:17.45px;" viewBox="0 0 16 16"><path fill="#a0a0a0" d="M10.08 8 5.71 3.68 6.35 3.04 10.99 7.73V8.32L6.35 13.01L5.71 12.37Z"/></svg>
<svg class="ic" style="left:1180.08px;top:80.58px;width:17.45px;height:17.45px;" viewBox="0 0 16 16"><path fill="#b180d7" d="M13.49 4 8.53 1.01H7.52L2.51 4L2.03 4.85V10.88L2.51 11.73L7.52 14.72H8.53L13.49 11.73L14.03 10.88V4.85ZM7.52 13.55 2.99 10.88V5.71L7.52 8.16ZM3.25 4.69 8 1.87 12.75 4.69 8 7.31ZM13.01 10.88 8.53 13.55V8.16L13.01 5.71Z"/></svg>
<div class="t " style="left:1201.00px;top:78.66px;font-size:14.18px;line-height:21.27px;color:#a9a9a9;letter-spacing:0.344px;">Java.perform() callback</div>
<svg class="ic" style="left:1357.48px;top:80.78px;width:17.45px;height:17.45px;" viewBox="0 0 16 16"><path fill="#a0a0a0" d="M10.08 8 5.71 3.68 6.35 3.04 10.99 7.73V8.32L6.35 13.01L5.71 12.37Z"/></svg>
<svg class="ic" style="left:1374.88px;top:80.58px;width:17.45px;height:17.45px;" viewBox="0 0 16 16"><path fill="#b180d7" d="M13.49 4 8.53 1.01H7.52L2.51 4L2.03 4.85V10.88L2.51 11.73L7.52 14.72H8.53L13.49 11.73L14.03 10.88V4.85ZM7.52 13.55 2.99 10.88V5.71L7.52 8.16ZM3.25 4.69 8 1.87 12.75 4.69 8 7.31ZM13.01 10.88 8.53 13.55V8.16L13.01 5.71Z"/></svg>
<div class="t " style="left:1395.50px;top:78.66px;font-size:14.18px;line-height:21.27px;color:#a9a9a9;letter-spacing:0.521px;">implementation</div>
<div class="b" style="left:669.60px;top:101.00px;width:3.30px;height:452.20px;background:#2ea043;"></div>
<div class="b" style="left:693.00px;top:101.00px;width:1.00px;height:451.90px;background:#404040;"></div>
<div class="b" style="left:708.80px;top:101.00px;width:1.00px;height:451.90px;background:#404040;"></div>
<div class="b" style="left:724.50px;top:375.20px;width:1.00px;height:177.70px;background:#404040;"></div>
<div class="b" style="left:740.30px;top:394.84px;width:1.00px;height:137.45px;background:#707070;"></div>
<div class="b" style="left:693.60px;top:493.32px;width:970.00px;height:19.64px;background:#3c3f43;border-radius:0 3px 3px 0"></div>
<div class="b" style="left:740.30px;top:493.02px;width:1.00px;height:19.64px;background:#707070;"></div>
<div class="b" style="left:620.6px;top:76.6px;width:1427.4px;height:476.6px;overflow:hidden"><div class="b" style="left:-620.6px;top:-76.6px;width:2048px;height:1152px">
<div class="ln" style="top:100.30px;">529</div>
<div class="cl" style="top:100.30px">    <span class="c">// print static propery value</span></div>
<div class="ln" style="top:119.94px;">530</div>
<div class="cl" style="top:119.94px">    <span class="k">var</span> <span class="v">m1EC</span><span class="p"> = </span><span class="v">m1ECls</span><span class="p">.</span><span class="v">c</span></div>
<div class="ln" style="top:139.57px;">531</div>
<div class="cl" style="top:139.57px">    <span class="k">var</span> <span class="v">m1ED</span><span class="p"> = </span><span class="v">m1ECls</span><span class="p">.</span><span class="v">d</span></div>
<div class="ln" style="top:159.21px;">532</div>
<div class="cl" style="top:159.21px">    <span class="k">var</span> <span class="v">m1EE</span><span class="p"> = </span><span class="v">m1ECls</span><span class="p">.</span><span class="v">e</span></div>
<div class="ln" style="top:178.84px;">533</div>
<div class="cl" style="top:178.84px">    <span class="v">console</span><span class="p">.</span><span class="f">log</span><span class="b1">(</span><span class="s">"m1EC="</span><span class="p"> + </span><span class="v">m1EC</span><span class="p"> + </span><span class="s">", m1ED="</span><span class="p"> + </span><span class="v">m1ED</span><span class="p"> + </span><span class="s">", m1EE="</span><span class="p"> + </span><span class="v">m1EE</span><span class="b1">)</span></div>
<div class="ln" style="top:198.48px;">534</div>
<div class="cl" style="top:198.48px">    <span class="k">var</span> <span class="v">m1ECValue</span><span class="p"> = </span><span class="v">m1EC</span><span class="p">.</span><span class="v">value</span></div>
<div class="ln" style="top:218.12px;">535</div>
<div class="cl" style="top:218.12px">    <span class="k">var</span> <span class="v">m1EDValue</span><span class="p"> = </span><span class="v">m1ED</span><span class="p">.</span><span class="v">value</span></div>
<div class="ln" style="top:237.75px;">536</div>
<div class="cl" style="top:237.75px">    <span class="k">var</span> <span class="v">m1EEValue</span><span class="p"> = </span><span class="v">m1EE</span><span class="p">.</span><span class="v">value</span></div>
<div class="ln" style="top:257.39px;">537</div>
<div class="cl" style="top:257.39px">    <span class="v">console</span><span class="p">.</span><span class="f">log</span><span class="b1">(</span><span class="s">"m1ECValue="</span><span class="p"> + </span><span class="v">m1ECValue</span><span class="p"> + </span><span class="s">", m1EDValue="</span><span class="p"> + </span><span class="v">m1EDValue</span><span class="p"> + </span><span class="s">", m1EEValue="</span><span class="p"> + </span><span class="v">m1EEValue</span><span class="b1">)</span></div>
<div class="ln" style="top:277.02px;">538</div>
<div class="ln" style="top:296.66px;">539</div>
<div class="cl" style="top:296.66px">    <span class="c">// public static String i(String str, String str2) {</span></div>
<div class="ln" style="top:316.30px;">540</div>
<div class="cl" style="top:316.30px">    <span class="k">var</span> <span class="v">m1EIFunc</span><span class="p"> = </span><span class="v">m1ECls</span><span class="p">.</span><span class="v">i</span></div>
<div class="ln" style="top:335.93px;">541</div>
<div class="cl" style="top:335.93px">    <span class="v">console</span><span class="p">.</span><span class="f">log</span><span class="b1">(</span><span class="s">"m1EIFunc="</span><span class="p"> + </span><span class="v">m1EIFunc</span><span class="b1">)</span></div>
<div class="ln" style="top:355.57px;">542</div>
<div class="cl" style="top:355.57px">    <span class="kc">if</span> <span class="b1">(</span><span class="v">m1EIFunc</span><span class="b1">)</span> <span class="b1">{</span></div>
<div class="ln" style="top:375.20px;">543</div>
<div class="cl" style="top:375.20px">      <span class="v">m1EIFunc</span><span class="p">.</span><span class="f">implementation</span><span class="p"> = </span><span class="k">function</span> <span class="b2">(</span><span class="v">str1</span><span class="p">, </span><span class="v">str2</span><span class="b2">)</span> <span class="b2">{</span></div>
<div class="ln" style="top:394.84px;">544</div>
<div class="cl" style="top:394.84px">        <span class="c">// PrintStack(Throwable.$new())</span></div>
<div class="ln" style="top:414.48px;">545</div>
<div class="cl" style="top:414.48px">        <span class="k">var</span> <span class="v">decryptedStr</span><span class="p"> = </span><span class="k">this</span><span class="p">.</span><span class="f">i</span><span class="b3">(</span><span class="v">str1</span><span class="p">, </span><span class="v">str2</span><span class="b3">)</span></div>
<div class="ln" style="top:434.11px;">546</div>
<div class="cl" style="top:434.11px">        <span class="c">// console.log("m1.e.i(): str1=" + str1 + ", str2=" + str2 + " -&gt; " + decryptedStr)</span></div>
<div class="ln" style="top:453.75px;">547</div>
<div class="cl" style="top:453.75px">        <span class="k">var</span> <span class="v">str1Stripped</span><span class="p"> = </span><span class="v">str1</span><span class="p">.</span><span class="f">trim</span><span class="b3">()</span></div>
<div class="ln" style="top:473.38px;">548</div>
<div class="cl" style="top:473.38px">        <span class="k">var</span> <span class="v">str2Stripped</span><span class="p"> = </span><span class="v">str2</span><span class="p">.</span><span class="f">trim</span><span class="b3">()</span></div>
<div class="ln" style="top:493.02px;">549</div>
<div class="cl" style="top:493.02px"><span class="ws">·</span><span class="ws">·</span><span class="ws">·</span><span class="ws">·</span><span class="ws">·</span><span class="ws">·</span><span class="ws">·</span><span class="ws">·</span><span class="v">console</span><span class="p">.</span><span class="f">log</span><span class="b3">(</span><span class="s">"m1.e.i():</span><span class="ws">·</span><span class="s">str1Stripped="</span><span class="ws">·</span><span class="p">+</span><span class="ws">·</span><span class="v">str1Stripped</span><span class="ws">·</span><span class="p">+</span><span class="ws">·</span><span class="s">",</span><span class="ws">·</span><span class="s">str2Stripped="</span><span class="ws">·</span><span class="p">+</span><span class="ws">·</span><span class="v">str2Stripped</span><span class="ws">·</span><span class="p">+</span><span class="ws">·</span><span class="s">"</span><span class="ws">·</span><span class="s">--&gt;&gt;</span><span class="ws">·</span><span class="s">"</span><span class="ws">·</span><span class="p">+</span><span class="ws">·</span><span class="v">decryptedStr</span><span class="b3">)</span></div>
<div class="ln" style="top:512.66px;color:#dadada;-webkit-text-stroke:.3px;">550</div>
<div class="cl" style="top:512.66px">        <span class="kc">return</span> <span class="v">decryptedStr</span></div>
<div class="ln" style="top:532.29px;">551</div>
<div class="cl" style="top:532.29px">      <span class="b2">}</span></div>
</div></div>
<svg class="ic" style="left:692.57px;top:493.88px;width:17.45px;height:17.45px;" viewBox="0 0 16 16"><path fill="#ffcc00" d="M11.68 8.64Q11.2 9.12 10.91 9.76Q10.61 10.4 10.61 11.09V12.69Q10.61 13.07 10.4 13.41Q10.19 13.76 9.81 13.92Q9.6 14.03 9.33 13.97H7.73Q7.15 14.03 6.77 13.63Q6.4 13.23 6.4 12.69V11.09Q6.4 10.4 6.13 9.76Q5.87 9.12 5.39 8.64Q4.75 8.05 4.37 7.23Q4 6.4 4 5.49Q4 4.27 4.64 3.25Q4.91 2.72 5.31 2.32Q5.71 1.92 6.21 1.63Q6.72 1.33 7.31 1.17Q7.89 1.01 8.53 1.01Q9.76 1.01 10.8 1.6Q11.84 2.19 12.43 3.23Q13.01 4.27 13.01 5.49Q13.01 6.45 12.67 7.25Q12.32 8.05 11.68 8.64ZM9.6 10.51H7.41V12.69Q7.41 12.8 7.49 12.91Q7.57 13.01 7.73 13.01H9.33Q9.44 13.01 9.52 12.93Q9.6 12.85 9.6 12.69Z"/></svg>
<!-- find widget -->
<div class="b" style="left:1306.40px;top:100.60px;width:579.60px;height:35.60px;background:#202020;border:1px solid #303030;border-top:0;border-radius:0 0 4.5px 4.5px;box-shadow:0 1px 8px rgba(0,0,0,.45)"></div>
<div class="b" style="left:1306.40px;top:100.60px;width:3.50px;height:35.00px;background:#3c3c3c;border-radius:0 0 0 4.5px"></div>
<svg class="ic" style="left:1312.58px;top:109.98px;width:17.45px;height:17.45px;" viewBox="0 0 16 16"><path fill="#cccccc" d="M10.08 8 5.71 3.68 6.35 3.04 10.99 7.73V8.32L6.35 13.01L5.71 12.37Z"/></svg>
<div class="b" style="left:1330.30px;top:104.30px;width:290.50px;height:26.50px;background:#2a2a2a;border:1px solid #3f3f3f;border-radius:2.5px"></div>
<div class="t " style="left:1337.80px;top:107.77px;font-size:14.18px;line-height:21.27px;color:#cccccc;letter-spacing:0.239px;">BinderCls.execTransact</div>
<svg class="ic" style="left:1551.08px;top:109.28px;width:17.45px;height:17.45px;" viewBox="0 0 16 16"><path fill="#cccccc" d="M8.85 11.68H7.84L7.04 9.55H3.79L2.99 11.68H2.03L4.96 4H5.87ZM6.72 8.75 5.55 5.44Q5.49 5.28 5.44 4.96H5.39Q5.33 5.28 5.28 5.44L4.05 8.75ZM13.76 11.68H12.85V10.83Q12.27 11.84 11.15 11.84Q10.35 11.84 9.87 11.41Q9.39 10.99 9.39 10.24Q9.39 8.69 11.2 8.43L12.85 8.21Q12.85 6.83 11.73 6.83Q10.77 6.83 9.97 7.47V6.61Q10.77 6.08 11.84 6.08Q13.76 6.08 13.76 8.11ZM12.85 8.91 11.57 9.12Q10.93 9.17 10.61 9.39Q10.29 9.6 10.29 10.19Q10.29 10.56 10.59 10.83Q10.88 11.09 11.36 11.09Q12 11.09 12.43 10.64Q12.85 10.19 12.85 9.49Z"/></svg>
<svg class="ic" style="left:1575.08px;top:109.28px;width:17.45px;height:17.45px;" viewBox="0 0 16 16"><path fill="#cccccc" d="M0 10.99H1.01V13.01H14.99V10.99H16V13.97H0ZM6.83 10.99H5.97V10.13H5.92Q5.39 11.15 4.27 11.15Q3.41 11.15 2.96 10.69Q2.51 10.24 2.51 9.55Q2.51 8 4.32 7.73L5.97 7.52Q5.97 6.13 4.8 6.13Q3.84 6.13 3.04 6.77V5.87Q3.84 5.39 4.91 5.39Q6.83 5.39 6.83 7.41ZM5.97 8.21 4.64 8.43Q4 8.48 3.71 8.69Q3.41 8.91 3.41 9.49Q3.41 9.87 3.68 10.13Q3.95 10.4 4.43 10.4Q5.12 10.4 5.55 9.95Q5.97 9.49 5.97 8.75ZM9.33 10.19V10.99H8.43V2.88H9.33V6.45Q9.97 5.39 11.25 5.39Q12.32 5.39 12.91 6.11Q13.49 6.83 13.49 8.11Q13.49 9.49 12.83 10.32Q12.16 11.15 11.04 11.15Q9.92 11.15 9.33 10.19ZM9.33 8V8.75Q9.33 9.44 9.76 9.92Q10.19 10.4 10.88 10.4Q11.68 10.4 12.13 9.79Q12.59 9.17 12.59 8.05Q12.59 7.15 12.16 6.64Q11.73 6.13 10.99 6.13Q10.24 6.13 9.79 6.67Q9.33 7.2 9.33 8Z"/></svg>
<svg class="ic" style="left:1599.08px;top:109.28px;width:17.45px;height:17.45px;" viewBox="0 0 16 16"><path fill="#cccccc" d="M10.03 1.97H10.99V5.12L13.55 3.57L14.03 4.43L11.47 5.97L14.03 7.57L13.55 8.43L10.99 6.88V9.97H10.03V6.88L7.47 8.43L6.99 7.57L9.55 5.97L6.99 4.43L7.47 3.57L10.03 5.12ZM2.03 9.97H6.03V13.97H2.03Z"/></svg>
<div class="t cjk" style="left:1626.80px;top:108.78px;font-size:13.09px;line-height:19.63px;color:#f85149;">无结果</div>
<svg class="ic" style="left:1779.68px;top:109.28px;width:17.45px;height:17.45px;" viewBox="0 0 16 16"><path fill="#7a7a7a" d="M13.87 6.99 8.85 1.97H8.16L3.15 6.99L3.84 7.73L8 3.57V13.97H9.01V3.57L13.12 7.73Z"/></svg>
<svg class="ic" style="left:1807.08px;top:109.28px;width:17.45px;height:17.45px;" viewBox="0 0 16 16"><path fill="#7a7a7a" d="M3.15 9.01 8.16 13.97H8.85L13.87 9.01L13.17 8.27L9.01 12.43V1.97H8V12.43L3.84 8.27Z"/></svg>
<svg class="ic" style="left:1833.68px;top:109.28px;width:17.45px;height:17.45px;" viewBox="0 0 16 16"><path fill="#cccccc" d="M1.01 12V10.99H10.03V12ZM1.01 6.99H14.99V8H1.01ZM12 2.99V4H1.01V2.99Z"/></svg>
<svg class="ic" style="left:1859.88px;top:109.28px;width:17.45px;height:17.45px;" viewBox="0 0 16 16"><path fill="#cccccc" d="M8 8.69 11.63 12.37 12.37 11.63 8.69 8 12.37 4.37 11.63 3.63 8 7.31 4.37 3.63 3.63 4.37 7.31 8 3.63 11.63 4.37 12.37Z"/></svg>
<!-- minimap -->
<svg class="ic" style="left:0;top:0;width:2048px;height:560px;opacity:.62" viewBox="0 0 2048 560"><rect x="1908.7" y="103.00" width="5.5" height="1.15" fill="#c586c0" opacity="0.6"/><rect x="1915.1" y="103.00" width="7.4" height="1.15" fill="#569cd6" opacity="0.6"/><rect x="1923.4" y="103.00" width="5.5" height="1.15" fill="#9cdcfe" opacity="0.6"/><rect x="1906.8" y="105.16" width="0.9" height="1.15" fill="#d4d4d4" opacity="0.5"/><rect x="1906.8" y="109.49" width="2.8" height="1.15" fill="#569cd6" opacity="0.6"/><rect x="1910.5" y="109.49" width="6.4" height="1.15" fill="#9cdcfe" opacity="0.7"/><rect x="1917.9" y="109.49" width="0.9" height="1.15" fill="#d4d4d4" opacity="0.5"/><rect x="1919.7" y="109.49" width="16.6" height="1.15" fill="#9cdcfe" opacity="0.7"/><rect x="1908.7" y="111.65" width="7.4" height="1.15" fill="#ce9178" opacity="0.65"/><rect x="1908.7" y="113.82" width="8.3" height="1.15" fill="#ce9178" opacity="0.65"/><rect x="1908.7" y="115.98" width="14.7" height="1.15" fill="#ce9178" opacity="0.65"/><rect x="1908.7" y="118.14" width="8.3" height="1.15" fill="#ce9178" opacity="0.65"/><rect x="1908.7" y="120.31" width="12.0" height="1.15" fill="#ce9178" opacity="0.65"/><rect x="1908.7" y="122.47" width="7.4" height="1.15" fill="#ce9178" opacity="0.65"/><rect x="1908.7" y="124.63" width="14.7" height="1.15" fill="#ce9178" opacity="0.65"/><rect x="1908.7" y="126.80" width="10.1" height="1.15" fill="#ce9178" opacity="0.65"/><rect x="1908.7" y="128.96" width="7.4" height="1.15" fill="#ce9178" opacity="0.65"/><rect x="1908.7" y="131.12" width="8.3" height="1.15" fill="#ce9178" opacity="0.65"/><rect x="1908.7" y="133.29" width="12.9" height="1.15" fill="#ce9178" opacity="0.65"/><rect x="1908.7" y="135.45" width="12.9" height="1.15" fill="#ce9178" opacity="0.65"/><rect x="1908.7" y="137.62" width="8.3" height="1.15" fill="#ce9178" opacity="0.65"/><rect x="1908.7" y="139.78" width="10.1" height="1.15" fill="#ce9178" opacity="0.65"/><rect x="1906.8" y="141.94" width="0.9" height="1.15" fill="#d4d4d4" opacity="0.5"/><rect x="1906.8" y="146.27" width="10.1" height="1.15" fill="#6a9955" opacity="0.55"/><rect x="1917.9" y="146.27" width="8.3" height="1.15" fill="#6a9955" opacity="0.55"/><rect x="1906.8" y="148.43" width="7.4" height="1.15" fill="#9cdcfe" opacity="0.7"/><rect x="1915.1" y="148.43" width="10.1" height="1.15" fill="#dcdcaa" opacity="0.7"/><rect x="1926.2" y="148.43" width="7.4" height="1.15" fill="#569cd6" opacity="0.6"/><rect x="1934.4" y="148.43" width="4.6" height="1.15" fill="#9cdcfe" opacity="0.6"/><rect x="1940.0" y="148.43" width="0.9" height="1.15" fill="#d4d4d4" opacity="0.5"/><rect x="1908.7" y="150.60" width="12.0" height="1.15" fill="#9cdcfe" opacity="0.7"/><rect x="1921.6" y="150.60" width="9.2" height="1.15" fill="#dcdcaa" opacity="0.7"/><rect x="1931.7" y="150.60" width="7.4" height="1.15" fill="#569cd6" opacity="0.6"/><rect x="1940.0" y="150.60" width="7.4" height="1.15" fill="#9cdcfe" opacity="0.6"/><rect x="1948.2" y="150.60" width="0.9" height="1.15" fill="#d4d4d4" opacity="0.5"/><rect x="1910.5" y="152.76" width="2.8" height="1.15" fill="#569cd6" opacity="0.6"/><rect x="1914.2" y="152.76" width="10.1" height="1.15" fill="#9cdcfe" opacity="0.7"/><rect x="1925.2" y="152.76" width="0.9" height="1.15" fill="#d4d4d4" opacity="0.5"/><rect x="1927.1" y="152.76" width="6.4" height="1.15" fill="#9cdcfe" opacity="0.7"/><rect x="1910.5" y="154.92" width="2.8" height="1.15" fill="#569cd6" opacity="0.6"/><rect x="1914.2" y="154.92" width="7.4" height="1.15" fill="#9cdcfe" opacity="0.7"/><rect x="1922.5" y="154.92" width="0.9" height="1.15" fill="#d4d4d4" opacity="0.5"/><rect x="1924.3" y="154.92" width="6.4" height="1.15" fill="#9cdcfe" opacity="0.7"/><rect x="1910.5" y="157.09" width="2.8" height="1.15" fill="#569cd6" opacity="0.6"/><rect x="1914.2" y="157.09" width="6.4" height="1.15" fill="#9cdcfe" opacity="0.7"/><rect x="1921.6" y="157.09" width="0.9" height="1.15" fill="#d4d4d4" opacity="0.5"/><rect x="1923.4" y="157.09" width="13.8" height="1.15" fill="#9cdcfe" opacity="0.7"/><rect x="1910.5" y="159.25" width="6.4" height="1.15" fill="#9cdcfe" opacity="0.7"/><rect x="1917.9" y="159.25" width="2.8" height="1.15" fill="#dcdcaa" opacity="0.7"/><rect x="1921.6" y="159.25" width="6.4" height="1.15" fill="#ce9178" opacity="0.65"/><rect x="1928.9" y="159.25" width="11.0" height="1.15" fill="#9cdcfe" opacity="0.7"/><rect x="1940.9" y="159.25" width="5.5" height="1.15" fill="#ce9178" opacity="0.65"/><rect x="1947.3" y="159.25" width="7.4" height="1.15" fill="#9cdcfe" opacity="0.7"/><rect x="1955.6" y="159.25" width="12.0" height="1.15" fill="#ce9178" opacity="0.65"/><rect x="1968.5" y="159.25" width="5.5" height="1.15" fill="#9cdcfe" opacity="0.7"/><rect x="1974.9" y="159.25" width="5.5" height="1.15" fill="#ce9178" opacity="0.65"/><rect x="1981.4" y="159.25" width="6.4" height="1.15" fill="#9cdcfe" opacity="0.7"/><rect x="1908.7" y="161.41" width="0.9" height="1.15" fill="#d4d4d4" opacity="0.5"/><rect x="1908.7" y="165.74" width="5.5" height="1.15" fill="#c586c0" opacity="0.6"/><rect x="1915.1" y="165.74" width="7.4" height="1.15" fill="#569cd6" opacity="0.6"/><rect x="1923.4" y="165.74" width="5.5" height="1.15" fill="#9cdcfe" opacity="0.6"/><rect x="1906.8" y="167.90" width="0.9" height="1.15" fill="#d4d4d4" opacity="0.5"/><rect x="1906.8" y="174.39" width="10.1" height="1.15" fill="#6a9955" opacity="0.55"/><rect x="1917.9" y="174.39" width="3.7" height="1.15" fill="#6a9955" opacity="0.55"/><rect x="1906.8" y="176.56" width="11.0" height="1.15" fill="#9cdcfe" opacity="0.7"/><rect x="1918.8" y="176.56" width="9.2" height="1.15" fill="#dcdcaa" opacity="0.7"/><rect x="1928.9" y="176.56" width="7.4" height="1.15" fill="#569cd6" opacity="0.6"/><rect x="1937.2" y="176.56" width="7.4" height="1.15" fill="#9cdcfe" opacity="0.6"/><rect x="1945.5" y="176.56" width="0.9" height="1.15" fill="#d4d4d4" opacity="0.5"/><rect x="1908.7" y="178.72" width="8.3" height="1.15" fill="#9cdcfe" opacity="0.7"/><rect x="1917.9" y="178.72" width="15.6" height="1.15" fill="#dcdcaa" opacity="0.7"/><rect x="1934.4" y="178.72" width="7.4" height="1.15" fill="#569cd6" opacity="0.6"/><rect x="1942.7" y="178.72" width="8.3" height="1.15" fill="#9cdcfe" opacity="0.6"/><rect x="1951.9" y="178.72" width="0.9" height="1.15" fill="#d4d4d4" opacity="0.5"/><rect x="1910.5" y="180.88" width="2.8" height="1.15" fill="#569cd6" opacity="0.6"/><rect x="1914.2" y="180.88" width="10.1" height="1.15" fill="#9cdcfe" opacity="0.7"/><rect x="1925.2" y="180.88" width="0.9" height="1.15" fill="#d4d4d4" opacity="0.5"/><rect x="1927.1" y="180.88" width="14.7" height="1.15" fill="#9cdcfe" opacity="0.7"/><rect x="1910.5" y="183.05" width="2.8" height="1.15" fill="#569cd6" opacity="0.6"/><rect x="1914.2" y="183.05" width="11.0" height="1.15" fill="#9cdcfe" opacity="0.7"/><rect x="1926.2" y="183.05" width="0.9" height="1.15" fill="#d4d4d4" opacity="0.5"/><rect x="1928.0" y="183.05" width="18.4" height="1.15" fill="#9cdcfe" opacity="0.7"/><rect x="1910.5" y="185.21" width="2.8" height="1.15" fill="#569cd6" opacity="0.6"/><rect x="1914.2" y="185.21" width="9.2" height="1.15" fill="#9cdcfe" opacity="0.7"/><rect x="1924.3" y="185.21" width="0.9" height="1.15" fill="#d4d4d4" opacity="0.5"/><rect x="1926.2" y="185.21" width="13.8" height="1.15" fill="#9cdcfe" opacity="0.7"/><rect x="1910.5" y="187.37" width="6.4" height="1.15" fill="#9cdcfe" opacity="0.7"/><rect x="1917.9" y="187.37" width="2.8" height="1.15" fill="#dcdcaa" opacity="0.7"/><rect x="1921.6" y="187.37" width="6.4" height="1.15" fill="#ce9178" opacity="0.65"/><rect x="1928.9" y="187.37" width="6.4" height="1.15" fill="#9cdcfe" opacity="0.7"/><rect x="1936.3" y="187.37" width="5.5" height="1.15" fill="#ce9178" opacity="0.65"/><rect x="1942.7" y="187.37" width="7.4" height="1.15" fill="#9cdcfe" opacity="0.7"/><rect x="1908.7" y="189.54" width="0.9" height="1.15" fill="#d4d4d4" opacity="0.5"/><rect x="1908.7" y="193.87" width="5.5" height="1.15" fill="#c586c0" opacity="0.6"/><rect x="1915.1" y="193.87" width="7.4" height="1.15" fill="#569cd6" opacity="0.6"/><rect x="1923.4" y="193.87" width="7.4" height="1.15" fill="#9cdcfe" opacity="0.6"/><rect x="1906.8" y="196.03" width="0.9" height="1.15" fill="#d4d4d4" opacity="0.5"/><rect x="1906.8" y="202.52" width="7.4" height="1.15" fill="#6a9955" opacity="0.55"/><rect x="1915.1" y="202.52" width="9.2" height="1.15" fill="#6a9955" opacity="0.55"/><rect x="1925.2" y="202.52" width="6.4" height="1.15" fill="#6a9955" opacity="0.55"/><rect x="1932.6" y="202.52" width="11.0" height="1.15" fill="#6a9955" opacity="0.55"/><rect x="1944.6" y="202.52" width="3.7" height="1.15" fill="#6a9955" opacity="0.55"/><rect x="1906.8" y="204.68" width="7.4" height="1.15" fill="#9cdcfe" opacity="0.7"/><rect x="1915.1" y="204.68" width="16.6" height="1.15" fill="#dcdcaa" opacity="0.7"/><rect x="1932.6" y="204.68" width="7.4" height="1.15" fill="#569cd6" opacity="0.6"/><rect x="1940.9" y="204.68" width="6.4" height="1.15" fill="#9cdcfe" opacity="0.6"/><rect x="1948.2" y="204.68" width="0.9" height="1.15" fill="#d4d4d4" opacity="0.5"/><rect x="1908.7" y="206.85" width="8.3" height="1.15" fill="#9cdcfe" opacity="0.7"/><rect x="1917.9" y="206.85" width="13.8" height="1.15" fill="#dcdcaa" opacity="0.7"/><rect x="1932.6" y="206.85" width="7.4" height="1.15" fill="#569cd6" opacity="0.6"/><rect x="1940.9" y="206.85" width="4.6" height="1.15" fill="#9cdcfe" opacity="0.6"/><rect x="1946.4" y="206.85" width="0.9" height="1.15" fill="#d4d4d4" opacity="0.5"/><rect x="1910.5" y="209.01" width="2.8" height="1.15" fill="#569cd6" opacity="0.6"/><rect x="1914.2" y="209.01" width="11.0" height="1.15" fill="#9cdcfe" opacity="0.7"/><rect x="1926.2" y="209.01" width="0.9" height="1.15" fill="#d4d4d4" opacity="0.5"/><rect x="1928.0" y="209.01" width="17.5" height="1.15" fill="#9cdcfe" opacity="0.7"/><rect x="1910.5" y="211.17" width="2.8" height="1.15" fill="#569cd6" opacity="0.6"/><rect x="1914.2" y="211.17" width="4.6" height="1.15" fill="#9cdcfe" opacity="0.7"/><rect x="1919.7" y="211.17" width="0.9" height="1.15" fill="#d4d4d4" opacity="0.5"/><rect x="1921.6" y="211.17" width="7.4" height="1.15" fill="#9cdcfe" opacity="0.7"/><rect x="1910.5" y="213.34" width="2.8" height="1.15" fill="#569cd6" opacity="0.6"/><rect x="1914.2" y="213.34" width="9.2" height="1.15" fill="#9cdcfe" opacity="0.7"/><rect x="1924.3" y="213.34" width="0.9" height="1.15" fill="#d4d4d4" opacity="0.5"/><rect x="1926.2" y="213.34" width="14.7" height="1.15" fill="#9cdcfe" opacity="0.7"/><rect x="1910.5" y="215.50" width="6.4" height="1.15" fill="#9cdcfe" opacity="0.7"/><rect x="1917.9" y="215.50" width="2.8" height="1.15" fill="#dcdcaa" opacity="0.7"/><rect x="1921.6" y="215.50" width="12.9" height="1.15" fill="#ce9178" opacity="0.65"/><rect x="1935.4" y="215.50" width="10.1" height="1.15" fill="#9cdcfe" opacity="0.7"/><rect x="1946.4" y="215.50" width="12.9" height="1.15" fill="#ce9178" opacity="0.65"/><rect x="1960.2" y="215.50" width="10.1" height="1.15" fill="#9cdcfe" opacity="0.7"/><rect x="1971.2" y="215.50" width="5.5" height="1.15" fill="#ce9178" opacity="0.65"/><rect x="1977.7" y="215.50" width="4.6" height="1.15" fill="#9cdcfe" opacity="0.7"/><rect x="1908.7" y="217.66" width="0.9" height="1.15" fill="#d4d4d4" opacity="0.5"/><rect x="1908.7" y="221.99" width="5.5" height="1.15" fill="#c586c0" opacity="0.6"/><rect x="1915.1" y="221.99" width="7.4" height="1.15" fill="#569cd6" opacity="0.6"/><rect x="1923.4" y="221.99" width="5.5" height="1.15" fill="#9cdcfe" opacity="0.6"/><rect x="1906.8" y="224.15" width="0.9" height="1.15" fill="#d4d4d4" opacity="0.5"/><rect x="1906.8" y="230.64" width="3.7" height="1.15" fill="#6a9955" opacity="0.55"/><rect x="1911.4" y="230.64" width="2.8" height="1.15" fill="#6a9955" opacity="0.55"/><rect x="1915.1" y="230.64" width="6.4" height="1.15" fill="#6a9955" opacity="0.55"/><rect x="1922.5" y="230.64" width="11.0" height="1.15" fill="#6a9955" opacity="0.55"/><rect x="1934.4" y="230.64" width="9.2" height="1.15" fill="#6a9955" opacity="0.55"/><rect x="1906.8" y="232.81" width="8.3" height="1.15" fill="#6a9955" opacity="0.55"/><rect x="1916.0" y="232.81" width="7.4" height="1.15" fill="#6a9955" opacity="0.55"/><rect x="1924.3" y="232.81" width="2.8" height="1.15" fill="#6a9955" opacity="0.55"/><rect x="1928.0" y="232.81" width="9.2" height="1.15" fill="#6a9955" opacity="0.55"/><rect x="1908.7" y="234.97" width="4.6" height="1.15" fill="#6a9955" opacity="0.55"/><rect x="1914.2" y="234.97" width="11.0" height="1.15" fill="#6a9955" opacity="0.55"/><rect x="1926.2" y="234.97" width="3.7" height="1.15" fill="#6a9955" opacity="0.55"/><rect x="1930.8" y="234.97" width="9.2" height="1.15" fill="#6a9955" opacity="0.55"/><rect x="1910.5" y="237.13" width="5.5" height="1.15" fill="#6a9955" opacity="0.55"/><rect x="1917.0" y="237.13" width="6.4" height="1.15" fill="#6a9955" opacity="0.55"/><rect x="1908.7" y="239.30" width="5.5" height="1.15" fill="#6a9955" opacity="0.55"/><rect x="1915.1" y="239.30" width="8.3" height="1.15" fill="#6a9955" opacity="0.55"/><rect x="1924.3" y="239.30" width="8.3" height="1.15" fill="#6a9955" opacity="0.55"/><rect x="1908.7" y="241.46" width="3.7" height="1.15" fill="#6a9955" opacity="0.55"/><rect x="1913.3" y="241.46" width="4.6" height="1.15" fill="#6a9955" opacity="0.55"/><rect x="1918.8" y="241.46" width="9.2" height="1.15" fill="#6a9955" opacity="0.55"/><rect x="1928.9" y="241.46" width="8.3" height="1.15" fill="#6a9955" opacity="0.55"/><rect x="1938.1" y="241.46" width="10.1" height="1.15" fill="#6a9955" opacity="0.55"/><rect x="1910.5" y="243.62" width="4.6" height="1.15" fill="#6a9955" opacity="0.55"/><rect x="1916.0" y="243.62" width="8.3" height="1.15" fill="#6a9955" opacity="0.55"/><rect x="1925.2" y="243.62" width="10.1" height="1.15" fill="#6a9955" opacity="0.55"/><rect x="1936.3" y="243.62" width="6.4" height="1.15" fill="#6a9955" opacity="0.55"/><rect x="1908.7" y="245.79" width="8.3" height="1.15" fill="#6a9955" opacity="0.55"/><rect x="1917.9" y="245.79" width="7.4" height="1.15" fill="#6a9955" opacity="0.55"/><rect x="1926.2" y="245.79" width="8.3" height="1.15" fill="#6a9955" opacity="0.55"/><rect x="1935.4" y="245.79" width="5.5" height="1.15" fill="#6a9955" opacity="0.55"/><rect x="1941.8" y="245.79" width="4.6" height="1.15" fill="#6a9955" opacity="0.55"/><rect x="1947.3" y="245.79" width="3.7" height="1.15" fill="#6a9955" opacity="0.55"/><rect x="1951.9" y="245.79" width="4.6" height="1.15" fill="#6a9955" opacity="0.55"/><rect x="1906.8" y="247.95" width="5.5" height="1.15" fill="#6a9955" opacity="0.55"/><rect x="1913.3" y="247.95" width="5.5" height="1.15" fill="#6a9955" opacity="0.55"/><rect x="1919.7" y="247.95" width="2.8" height="1.15" fill="#6a9955" opacity="0.55"/><rect x="1906.8" y="252.28" width="11.0" height="1.15" fill="#6a9955" opacity="0.55"/><rect x="1918.8" y="252.28" width="4.6" height="1.15" fill="#6a9955" opacity="0.55"/><rect x="1924.3" y="252.28" width="6.4" height="1.15" fill="#6a9955" opacity="0.55"/><rect x="1931.7" y="252.28" width="6.4" height="1.15" fill="#6a9955" opacity="0.55"/><rect x="1939.0" y="252.28" width="2.8" height="1.15" fill="#6a9955" opacity="0.55"/><rect x="1906.8" y="254.44" width="8.3" height="1.15" fill="#9cdcfe" opacity="0.7"/><rect x="1916.0" y="254.44" width="14.7" height="1.15" fill="#dcdcaa" opacity="0.7"/><rect x="1931.7" y="254.44" width="7.4" height="1.15" fill="#569cd6" opacity="0.6"/><rect x="1940.0" y="254.44" width="7.4" height="1.15" fill="#9cdcfe" opacity="0.6"/><rect x="1948.2" y="254.44" width="0.9" height="1.15" fill="#d4d4d4" opacity="0.5"/><rect x="1908.7" y="256.61" width="9.2" height="1.15" fill="#9cdcfe" opacity="0.7"/><rect x="1918.8" y="256.61" width="13.8" height="1.15" fill="#dcdcaa" opacity="0.7"/><rect x="1933.5" y="256.61" width="7.4" height="1.15" fill="#569cd6" opacity="0.6"/><rect x="1941.8" y="256.61" width="4.6" height="1.15" fill="#9cdcfe" opacity="0.6"/><rect x="1947.3" y="256.61" width="0.9" height="1.15" fill="#d4d4d4" opacity="0.5"/><rect x="1910.5" y="258.77" width="6.4" height="1.15" fill="#9cdcfe" opacity="0.7"/><rect x="1917.9" y="258.77" width="2.8" height="1.15" fill="#dcdcaa" opacity="0.7"/><rect x="1921.6" y="258.77" width="11.0" height="1.15" fill="#ce9178" opacity="0.65"/><rect x="1933.5" y="258.77" width="11.0" height="1.15" fill="#9cdcfe" opacity="0.7"/><rect x="1908.7" y="260.93" width="0.9" height="1.15" fill="#d4d4d4" opacity="0.5"/><rect x="1908.7" y="263.10" width="5.5" height="1.15" fill="#c586c0" opacity="0.6"/><rect x="1915.1" y="263.10" width="7.4" height="1.15" fill="#569cd6" opacity="0.6"/><rect x="1923.4" y="263.10" width="6.4" height="1.15" fill="#9cdcfe" opacity="0.6"/><rect x="1910.5" y="265.26" width="6.4" height="1.15" fill="#9cdcfe" opacity="0.7"/><rect x="1917.9" y="265.26" width="2.8" height="1.15" fill="#dcdcaa" opacity="0.7"/><rect x="1921.6" y="265.26" width="10.1" height="1.15" fill="#ce9178" opacity="0.65"/><rect x="1932.6" y="265.26" width="9.2" height="1.15" fill="#9cdcfe" opacity="0.7"/><rect x="1942.7" y="265.26" width="5.5" height="1.15" fill="#ce9178" opacity="0.65"/><rect x="1949.2" y="265.26" width="10.1" height="1.15" fill="#9cdcfe" opacity="0.7"/><rect x="1960.2" y="265.26" width="10.1" height="1.15" fill="#ce9178" opacity="0.65"/><rect x="1971.2" y="265.26" width="3.7" height="1.15" fill="#9cdcfe" opacity="0.7"/><rect x="1975.8" y="265.26" width="7.4" height="1.15" fill="#ce9178" opacity="0.65"/><rect x="1984.1" y="265.26" width="4.6" height="1.15" fill="#9cdcfe" opacity="0.7"/><rect x="1908.7" y="267.42" width="0.9" height="1.15" fill="#d4d4d4" opacity="0.5"/><rect x="1906.8" y="269.59" width="0.9" height="1.15" fill="#d4d4d4" opacity="0.5"/><rect x="1906.8" y="276.08" width="9.2" height="1.15" fill="#6a9955" opacity="0.55"/><rect x="1917.0" y="276.08" width="4.6" height="1.15" fill="#6a9955" opacity="0.55"/><rect x="1922.5" y="276.08" width="3.7" height="1.15" fill="#6a9955" opacity="0.55"/><rect x="1906.8" y="278.24" width="9.2" height="1.15" fill="#9cdcfe" opacity="0.7"/><rect x="1917.0" y="278.24" width="9.2" height="1.15" fill="#dcdcaa" opacity="0.7"/><rect x="1927.1" y="278.24" width="7.4" height="1.15" fill="#569cd6" opacity="0.6"/><rect x="1935.4" y="278.24" width="3.7" height="1.15" fill="#9cdcfe" opacity="0.6"/><rect x="1940.0" y="278.24" width="0.9" height="1.15" fill="#d4d4d4" opacity="0.5"/><rect x="1908.7" y="280.40" width="7.4" height="1.15" fill="#9cdcfe" opacity="0.7"/><rect x="1917.0" y="280.40" width="11.0" height="1.15" fill="#dcdcaa" opacity="0.7"/><rect x="1928.9" y="280.40" width="7.4" height="1.15" fill="#569cd6" opacity="0.6"/><rect x="1937.2" y="280.40" width="7.4" height="1.15" fill="#9cdcfe" opacity="0.6"/><rect x="1945.5" y="280.40" width="0.9" height="1.15" fill="#d4d4d4" opacity="0.5"/><rect x="1910.5" y="282.57" width="6.4" height="1.15" fill="#9cdcfe" opacity="0.7"/><rect x="1917.9" y="282.57" width="2.8" height="1.15" fill="#dcdcaa" opacity="0.7"/><rect x="1921.6" y="282.57" width="9.2" height="1.15" fill="#ce9178" opacity="0.65"/><rect x="1931.7" y="282.57" width="3.7" height="1.15" fill="#9cdcfe" opacity="0.7"/><rect x="1908.7" y="284.73" width="0.9" height="1.15" fill="#d4d4d4" opacity="0.5"/><rect x="1908.7" y="286.89" width="5.5" height="1.15" fill="#c586c0" opacity="0.6"/><rect x="1915.1" y="286.89" width="7.4" height="1.15" fill="#569cd6" opacity="0.6"/><rect x="1923.4" y="286.89" width="3.7" height="1.15" fill="#9cdcfe" opacity="0.6"/><rect x="1910.5" y="289.06" width="6.4" height="1.15" fill="#9cdcfe" opacity="0.7"/><rect x="1917.9" y="289.06" width="2.8" height="1.15" fill="#dcdcaa" opacity="0.7"/><rect x="1921.6" y="289.06" width="12.9" height="1.15" fill="#ce9178" opacity="0.65"/><rect x="1935.4" y="289.06" width="9.2" height="1.15" fill="#9cdcfe" opacity="0.7"/><rect x="1945.5" y="289.06" width="6.4" height="1.15" fill="#ce9178" opacity="0.65"/><rect x="1952.8" y="289.06" width="7.4" height="1.15" fill="#9cdcfe" opacity="0.7"/><rect x="1908.7" y="291.22" width="0.9" height="1.15" fill="#d4d4d4" opacity="0.5"/><rect x="1906.8" y="293.38" width="0.9" height="1.15" fill="#d4d4d4" opacity="0.5"/><rect x="1906.8" y="299.87" width="11.0" height="1.15" fill="#6a9955" opacity="0.55"/><rect x="1918.8" y="299.87" width="7.4" height="1.15" fill="#6a9955" opacity="0.55"/><rect x="1927.1" y="299.87" width="9.2" height="1.15" fill="#6a9955" opacity="0.55"/><rect x="1937.2" y="299.87" width="3.7" height="1.15" fill="#6a9955" opacity="0.55"/><rect x="1906.8" y="302.04" width="7.4" height="1.15" fill="#9cdcfe" opacity="0.7"/><rect x="1915.1" y="302.04" width="15.6" height="1.15" fill="#dcdcaa" opacity="0.7"/><rect x="1931.7" y="302.04" width="7.4" height="1.15" fill="#569cd6" opacity="0.6"/><rect x="1940.0" y="302.04" width="6.4" height="1.15" fill="#9cdcfe" opacity="0.6"/><rect x="1947.3" y="302.04" width="0.9" height="1.15" fill="#d4d4d4" opacity="0.5"/><rect x="1908.7" y="304.20" width="10.1" height="1.15" fill="#9cdcfe" opacity="0.7"/><rect x="1919.7" y="304.20" width="15.6" height="1.15" fill="#dcdcaa" opacity="0.7"/><rect x="1936.3" y="304.20" width="7.4" height="1.15" fill="#569cd6" opacity="0.6"/><rect x="1944.6" y="304.20" width="5.5" height="1.15" fill="#9cdcfe" opacity="0.6"/><rect x="1951.0" y="304.20" width="0.9" height="1.15" fill="#d4d4d4" opacity="0.5"/><rect x="1910.5" y="306.36" width="2.8" height="1.15" fill="#569cd6" opacity="0.6"/><rect x="1914.2" y="306.36" width="5.5" height="1.15" fill="#9cdcfe" opacity="0.7"/><rect x="1920.6" y="306.36" width="0.9" height="1.15" fill="#d4d4d4" opacity="0.5"/><rect x="1922.5" y="306.36" width="9.2" height="1.15" fill="#9cdcfe" opacity="0.7"/><rect x="1910.5" y="308.53" width="2.8" height="1.15" fill="#569cd6" opacity="0.6"/><rect x="1914.2" y="308.53" width="5.5" height="1.15" fill="#9cdcfe" opacity="0.7"/><rect x="1920.6" y="308.53" width="0.9" height="1.15" fill="#d4d4d4" opacity="0.5"/><rect x="1922.5" y="308.53" width="14.7" height="1.15" fill="#9cdcfe" opacity="0.7"/><rect x="1910.5" y="310.69" width="6.4" height="1.15" fill="#9cdcfe" opacity="0.7"/><rect x="1917.9" y="310.69" width="2.8" height="1.15" fill="#dcdcaa" opacity="0.7"/><rect x="1921.6" y="310.69" width="11.0" height="1.15" fill="#ce9178" opacity="0.65"/><rect x="1933.5" y="310.69" width="5.5" height="1.15" fill="#9cdcfe" opacity="0.7"/><rect x="1940.0" y="310.69" width="12.0" height="1.15" fill="#ce9178" opacity="0.65"/><rect x="1952.8" y="310.69" width="3.7" height="1.15" fill="#9cdcfe" opacity="0.7"/><rect x="1957.4" y="310.69" width="7.4" height="1.15" fill="#ce9178" opacity="0.65"/><rect x="1965.7" y="310.69" width="11.0" height="1.15" fill="#9cdcfe" opacity="0.7"/><rect x="1908.7" y="312.85" width="0.9" height="1.15" fill="#d4d4d4" opacity="0.5"/><rect x="1908.7" y="315.02" width="5.5" height="1.15" fill="#c586c0" opacity="0.6"/><rect x="1915.1" y="315.02" width="7.4" height="1.15" fill="#569cd6" opacity="0.6"/><rect x="1923.4" y="315.02" width="5.5" height="1.15" fill="#9cdcfe" opacity="0.6"/><rect x="1906.8" y="317.18" width="0.9" height="1.15" fill="#d4d4d4" opacity="0.5"/><rect x="1906.8" y="319.35" width="0.9" height="1.15" fill="#d4d4d4" opacity="0.5"/><rect x="1905.0" y="325.84" width="0.9" height="1.15" fill="#d4d4d4" opacity="0.5"/><rect x="1905.0" y="328.00" width="5.5" height="1.15" fill="#c586c0" opacity="0.6"/><rect x="1911.4" y="328.00" width="7.4" height="1.15" fill="#569cd6" opacity="0.6"/><rect x="1919.7" y="328.00" width="4.6" height="1.15" fill="#9cdcfe" opacity="0.6"/><rect x="1906.8" y="330.16" width="10.1" height="1.15" fill="#6a9955" opacity="0.55"/><rect x="1917.9" y="330.16" width="2.8" height="1.15" fill="#6a9955" opacity="0.55"/><rect x="1921.6" y="330.16" width="10.1" height="1.15" fill="#6a9955" opacity="0.55"/><rect x="1932.6" y="330.16" width="6.4" height="1.15" fill="#6a9955" opacity="0.55"/><rect x="1940.0" y="330.16" width="3.7" height="1.15" fill="#6a9955" opacity="0.55"/><rect x="1944.6" y="330.16" width="6.4" height="1.15" fill="#6a9955" opacity="0.55"/><rect x="1951.9" y="330.16" width="10.1" height="1.15" fill="#6a9955" opacity="0.55"/><rect x="1908.7" y="332.33" width="6.4" height="1.15" fill="#9cdcfe" opacity="0.7"/><rect x="1916.0" y="332.33" width="2.8" height="1.15" fill="#dcdcaa" opacity="0.7"/><rect x="1919.7" y="332.33" width="6.4" height="1.15" fill="#ce9178" opacity="0.65"/><rect x="1927.1" y="332.33" width="8.3" height="1.15" fill="#9cdcfe" opacity="0.7"/><rect x="1936.3" y="332.33" width="7.4" height="1.15" fill="#ce9178" opacity="0.65"/><rect x="1944.6" y="332.33" width="11.0" height="1.15" fill="#9cdcfe" opacity="0.7"/><rect x="1956.5" y="332.33" width="12.0" height="1.15" fill="#ce9178" opacity="0.65"/><rect x="1969.4" y="332.33" width="11.0" height="1.15" fill="#9cdcfe" opacity="0.7"/><rect x="1908.7" y="334.49" width="5.5" height="1.15" fill="#c586c0" opacity="0.6"/><rect x="1915.1" y="334.49" width="7.4" height="1.15" fill="#569cd6" opacity="0.6"/><rect x="1923.4" y="334.49" width="5.5" height="1.15" fill="#9cdcfe" opacity="0.6"/><rect x="1906.8" y="336.65" width="0.9" height="1.15" fill="#d4d4d4" opacity="0.5"/><rect x="1906.8" y="343.14" width="6.4" height="1.15" fill="#9cdcfe" opacity="0.7"/><rect x="1914.2" y="343.14" width="2.8" height="1.15" fill="#dcdcaa" opacity="0.7"/><rect x="1917.9" y="343.14" width="12.9" height="1.15" fill="#ce9178" opacity="0.65"/><rect x="1931.7" y="343.14" width="6.4" height="1.15" fill="#9cdcfe" opacity="0.7"/><rect x="1939.0" y="343.14" width="7.4" height="1.15" fill="#ce9178" opacity="0.65"/><rect x="1947.3" y="343.14" width="9.2" height="1.15" fill="#9cdcfe" opacity="0.7"/><rect x="1906.8" y="345.31" width="6.4" height="1.15" fill="#9cdcfe" opacity="0.7"/><rect x="1914.2" y="345.31" width="2.8" height="1.15" fill="#dcdcaa" opacity="0.7"/><rect x="1917.9" y="345.31" width="7.4" height="1.15" fill="#ce9178" opacity="0.65"/><rect x="1926.2" y="345.31" width="11.0" height="1.15" fill="#9cdcfe" opacity="0.7"/><rect x="1938.1" y="345.31" width="11.0" height="1.15" fill="#ce9178" opacity="0.65"/><rect x="1950.1" y="345.31" width="8.3" height="1.15" fill="#9cdcfe" opacity="0.7"/><rect x="1906.8" y="349.63" width="12.0" height="1.15" fill="#9cdcfe" opacity="0.7"/><rect x="1919.7" y="349.63" width="9.2" height="1.15" fill="#dcdcaa" opacity="0.7"/><rect x="1929.8" y="349.63" width="7.4" height="1.15" fill="#569cd6" opacity="0.6"/><rect x="1938.1" y="349.63" width="3.7" height="1.15" fill="#9cdcfe" opacity="0.6"/><rect x="1942.7" y="349.63" width="0.9" height="1.15" fill="#d4d4d4" opacity="0.5"/><rect x="1908.7" y="353.96" width="9.2" height="1.15" fill="#6a9955" opacity="0.55"/><rect x="1918.8" y="353.96" width="6.4" height="1.15" fill="#6a9955" opacity="0.55"/><rect x="1926.2" y="353.96" width="5.5" height="1.15" fill="#6a9955" opacity="0.55"/><rect x="1932.6" y="353.96" width="11.0" height="1.15" fill="#6a9955" opacity="0.55"/><rect x="1908.7" y="358.29" width="2.8" height="1.15" fill="#569cd6" opacity="0.6"/><rect x="1912.4" y="358.29" width="9.2" height="1.15" fill="#9cdcfe" opacity="0.7"/><rect x="1922.5" y="358.29" width="0.9" height="1.15" fill="#d4d4d4" opacity="0.5"/><rect x="1924.3" y="358.29" width="18.4" height="1.15" fill="#9cdcfe" opacity="0.7"/><rect x="1908.7" y="360.45" width="6.4" height="1.15" fill="#9cdcfe" opacity="0.7"/><rect x="1916.0" y="360.45" width="2.8" height="1.15" fill="#dcdcaa" opacity="0.7"/><rect x="1919.7" y="360.45" width="9.2" height="1.15" fill="#ce9178" opacity="0.65"/><rect x="1929.8" y="360.45" width="4.6" height="1.15" fill="#9cdcfe" opacity="0.7"/><rect x="1935.4" y="360.45" width="7.4" height="1.15" fill="#ce9178" opacity="0.65"/><rect x="1943.6" y="360.45" width="4.6" height="1.15" fill="#9cdcfe" opacity="0.7"/><rect x="1949.2" y="360.45" width="7.4" height="1.15" fill="#ce9178" opacity="0.65"/><rect x="1957.4" y="360.45" width="10.1" height="1.15" fill="#9cdcfe" opacity="0.7"/><rect x="1908.7" y="364.78" width="2.8" height="1.15" fill="#569cd6" opacity="0.6"/><rect x="1912.4" y="364.78" width="7.4" height="1.15" fill="#9cdcfe" opacity="0.7"/><rect x="1920.6" y="364.78" width="0.9" height="1.15" fill="#d4d4d4" opacity="0.5"/><rect x="1922.5" y="364.78" width="14.7" height="1.15" fill="#9cdcfe" opacity="0.7"/><rect x="1908.7" y="366.94" width="6.4" height="1.15" fill="#9cdcfe" opacity="0.7"/><rect x="1916.0" y="366.94" width="2.8" height="1.15" fill="#dcdcaa" opacity="0.7"/><rect x="1919.7" y="366.94" width="11.0" height="1.15" fill="#ce9178" opacity="0.65"/><rect x="1931.7" y="366.94" width="3.7" height="1.15" fill="#9cdcfe" opacity="0.7"/><rect x="1936.3" y="366.94" width="11.0" height="1.15" fill="#ce9178" opacity="0.65"/><rect x="1948.2" y="366.94" width="8.3" height="1.15" fill="#9cdcfe" opacity="0.7"/><rect x="1908.7" y="371.27" width="3.7" height="1.15" fill="#6a9955" opacity="0.55"/><rect x="1913.3" y="371.27" width="3.7" height="1.15" fill="#6a9955" opacity="0.55"/><rect x="1917.9" y="371.27" width="8.3" height="1.15" fill="#6a9955" opacity="0.55"/><rect x="1927.1" y="371.27" width="5.5" height="1.15" fill="#6a9955" opacity="0.55"/><rect x="1933.5" y="371.27" width="9.2" height="1.15" fill="#6a9955" opacity="0.55"/><rect x="1943.6" y="371.27" width="4.6" height="1.15" fill="#6a9955" opacity="0.55"/><rect x="1949.2" y="371.27" width="8.3" height="1.15" fill="#6a9955" opacity="0.55"/><rect x="1908.7" y="373.43" width="2.8" height="1.15" fill="#569cd6" opacity="0.6"/><rect x="1912.4" y="373.43" width="9.2" height="1.15" fill="#9cdcfe" opacity="0.7"/><rect x="1922.5" y="373.43" width="0.9" height="1.15" fill="#d4d4d4" opacity="0.5"/><rect x="1924.3" y="373.43" width="7.4" height="1.15" fill="#9cdcfe" opacity="0.7"/><rect x="1908.7" y="375.60" width="2.8" height="1.15" fill="#569cd6" opacity="0.6"/><rect x="1912.4" y="375.60" width="10.1" height="1.15" fill="#9cdcfe" opacity="0.7"/><rect x="1923.4" y="375.60" width="0.9" height="1.15" fill="#d4d4d4" opacity="0.5"/><rect x="1925.2" y="375.60" width="18.4" height="1.15" fill="#9cdcfe" opacity="0.7"/><rect x="1908.7" y="377.76" width="6.4" height="1.15" fill="#9cdcfe" opacity="0.7"/><rect x="1916.0" y="377.76" width="2.8" height="1.15" fill="#dcdcaa" opacity="0.7"/><rect x="1919.7" y="377.76" width="5.5" height="1.15" fill="#ce9178" opacity="0.65"/><rect x="1926.2" y="377.76" width="5.5" height="1.15" fill="#9cdcfe" opacity="0.7"/><rect x="1932.6" y="377.76" width="6.4" height="1.15" fill="#ce9178" opacity="0.65"/><rect x="1940.0" y="377.76" width="5.5" height="1.15" fill="#9cdcfe" opacity="0.7"/><rect x="1946.4" y="377.76" width="4.6" height="1.15" fill="#ce9178" opacity="0.65"/><rect x="1951.9" y="377.76" width="5.5" height="1.15" fill="#9cdcfe" opacity="0.7"/><rect x="1958.4" y="377.76" width="12.9" height="1.15" fill="#ce9178" opacity="0.65"/><rect x="1972.2" y="377.76" width="10.1" height="1.15" fill="#9cdcfe" opacity="0.7"/><rect x="1908.7" y="379.92" width="4.6" height="1.15" fill="#6a9955" opacity="0.55"/><rect x="1914.2" y="379.92" width="11.0" height="1.15" fill="#6a9955" opacity="0.55"/><rect x="1926.2" y="379.92" width="11.0" height="1.15" fill="#6a9955" opacity="0.55"/><rect x="1938.1" y="379.92" width="9.2" height="1.15" fill="#6a9955" opacity="0.55"/><rect x="1948.2" y="379.92" width="7.4" height="1.15" fill="#6a9955" opacity="0.55"/><rect x="1956.5" y="379.92" width="4.6" height="1.15" fill="#6a9955" opacity="0.55"/><rect x="1962.0" y="379.92" width="10.1" height="1.15" fill="#6a9955" opacity="0.55"/><rect x="1908.7" y="384.25" width="2.8" height="1.15" fill="#569cd6" opacity="0.6"/><rect x="1912.4" y="384.25" width="6.4" height="1.15" fill="#9cdcfe" opacity="0.7"/><rect x="1919.7" y="384.25" width="0.9" height="1.15" fill="#d4d4d4" opacity="0.5"/><rect x="1921.6" y="384.25" width="5.5" height="1.15" fill="#9cdcfe" opacity="0.7"/><rect x="1908.7" y="386.41" width="2.8" height="1.15" fill="#569cd6" opacity="0.6"/><rect x="1912.4" y="386.41" width="4.6" height="1.15" fill="#9cdcfe" opacity="0.7"/><rect x="1917.9" y="386.41" width="0.9" height="1.15" fill="#d4d4d4" opacity="0.5"/><rect x="1919.7" y="386.41" width="8.3" height="1.15" fill="#9cdcfe" opacity="0.7"/><rect x="1908.7" y="388.58" width="6.4" height="1.15" fill="#9cdcfe" opacity="0.7"/><rect x="1916.0" y="388.58" width="2.8" height="1.15" fill="#dcdcaa" opacity="0.7"/><rect x="1919.7" y="388.58" width="10.1" height="1.15" fill="#ce9178" opacity="0.65"/><rect x="1930.8" y="388.58" width="6.4" height="1.15" fill="#9cdcfe" opacity="0.7"/><rect x="1938.1" y="388.58" width="7.4" height="1.15" fill="#ce9178" opacity="0.65"/><rect x="1946.4" y="388.58" width="3.7" height="1.15" fill="#9cdcfe" opacity="0.7"/><rect x="1908.7" y="390.74" width="5.5" height="1.15" fill="#6a9955" opacity="0.55"/><rect x="1915.1" y="390.74" width="6.4" height="1.15" fill="#6a9955" opacity="0.55"/><rect x="1922.5" y="390.74" width="10.1" height="1.15" fill="#6a9955" opacity="0.55"/><rect x="1933.5" y="390.74" width="5.5" height="1.15" fill="#6a9955" opacity="0.55"/><rect x="1908.7" y="395.07" width="7.4" height="1.15" fill="#6a9955" opacity="0.55"/><rect x="1917.0" y="395.07" width="6.4" height="1.15" fill="#6a9955" opacity="0.55"/><rect x="1924.3" y="395.07" width="10.1" height="1.15" fill="#6a9955" opacity="0.55"/><rect x="1935.4" y="395.07" width="8.3" height="1.15" fill="#6a9955" opacity="0.55"/><rect x="1944.6" y="395.07" width="4.6" height="1.15" fill="#6a9955" opacity="0.55"/><rect x="1950.1" y="395.07" width="2.8" height="1.15" fill="#6a9955" opacity="0.55"/><rect x="1908.7" y="397.23" width="2.8" height="1.15" fill="#569cd6" opacity="0.6"/><rect x="1912.4" y="397.23" width="9.2" height="1.15" fill="#9cdcfe" opacity="0.7"/><rect x="1922.5" y="397.23" width="0.9" height="1.15" fill="#d4d4d4" opacity="0.5"/><rect x="1924.3" y="397.23" width="18.4" height="1.15" fill="#9cdcfe" opacity="0.7"/><rect x="1908.7" y="399.39" width="6.4" height="1.15" fill="#9cdcfe" opacity="0.7"/><rect x="1916.0" y="399.39" width="2.8" height="1.15" fill="#dcdcaa" opacity="0.7"/><rect x="1919.7" y="399.39" width="12.0" height="1.15" fill="#ce9178" opacity="0.65"/><rect x="1932.6" y="399.39" width="5.5" height="1.15" fill="#9cdcfe" opacity="0.7"/><rect x="1939.0" y="399.39" width="12.0" height="1.15" fill="#ce9178" opacity="0.65"/><rect x="1951.9" y="399.39" width="5.5" height="1.15" fill="#9cdcfe" opacity="0.7"/><rect x="1958.4" y="399.39" width="12.0" height="1.15" fill="#ce9178" opacity="0.65"/><rect x="1971.2" y="399.39" width="11.0" height="1.15" fill="#9cdcfe" opacity="0.7"/><rect x="1983.2" y="399.39" width="4.6" height="1.15" fill="#ce9178" opacity="0.65"/><rect x="1988.7" y="399.39" width="10.1" height="1.15" fill="#9cdcfe" opacity="0.7"/><rect x="1908.7" y="401.56" width="0.9" height="1.15" fill="#d4d4d4" opacity="0.5"/><rect x="1910.5" y="403.72" width="12.9" height="1.15" fill="#9cdcfe" opacity="0.7"/><rect x="1924.3" y="403.72" width="11.0" height="1.15" fill="#dcdcaa" opacity="0.7"/><rect x="1936.3" y="403.72" width="7.4" height="1.15" fill="#569cd6" opacity="0.6"/><rect x="1944.6" y="403.72" width="7.4" height="1.15" fill="#9cdcfe" opacity="0.6"/><rect x="1952.8" y="403.72" width="0.9" height="1.15" fill="#d4d4d4" opacity="0.5"/><rect x="1912.4" y="405.88" width="6.4" height="1.15" fill="#9cdcfe" opacity="0.7"/><rect x="1919.7" y="405.88" width="2.8" height="1.15" fill="#dcdcaa" opacity="0.7"/><rect x="1923.4" y="405.88" width="6.4" height="1.15" fill="#ce9178" opacity="0.65"/><rect x="1930.8" y="405.88" width="5.5" height="1.15" fill="#9cdcfe" opacity="0.7"/><rect x="1912.4" y="408.05" width="9.2" height="1.15" fill="#6a9955" opacity="0.55"/><rect x="1922.5" y="408.05" width="11.0" height="1.15" fill="#6a9955" opacity="0.55"/><rect x="1934.4" y="408.05" width="3.7" height="1.15" fill="#6a9955" opacity="0.55"/><rect x="1912.4" y="410.21" width="5.5" height="1.15" fill="#c586c0" opacity="0.6"/><rect x="1918.8" y="410.21" width="7.4" height="1.15" fill="#569cd6" opacity="0.6"/><rect x="1927.1" y="410.21" width="7.4" height="1.15" fill="#9cdcfe" opacity="0.6"/><rect x="1910.5" y="412.37" width="0.9" height="1.15" fill="#d4d4d4" opacity="0.5"/><rect x="1908.7" y="414.54" width="0.9" height="1.15" fill="#d4d4d4" opacity="0.5"/><rect x="1908.7" y="418.86" width="7.4" height="1.15" fill="#6a9955" opacity="0.55"/><rect x="1917.0" y="418.86" width="10.1" height="1.15" fill="#6a9955" opacity="0.55"/><rect x="1908.7" y="421.03" width="10.1" height="1.15" fill="#6a9955" opacity="0.55"/><rect x="1919.7" y="421.03" width="9.2" height="1.15" fill="#6a9955" opacity="0.55"/><rect x="1929.8" y="421.03" width="3.7" height="1.15" fill="#6a9955" opacity="0.55"/><rect x="1934.4" y="421.03" width="10.1" height="1.15" fill="#6a9955" opacity="0.55"/><rect x="1945.5" y="421.03" width="2.8" height="1.15" fill="#6a9955" opacity="0.55"/><rect x="1949.2" y="421.03" width="5.5" height="1.15" fill="#6a9955" opacity="0.55"/><rect x="1908.7" y="423.19" width="6.4" height="1.15" fill="#6a9955" opacity="0.55"/><rect x="1916.0" y="423.19" width="2.8" height="1.15" fill="#6a9955" opacity="0.55"/><rect x="1919.7" y="423.19" width="3.7" height="1.15" fill="#6a9955" opacity="0.55"/><rect x="1908.7" y="425.35" width="2.8" height="1.15" fill="#569cd6" opacity="0.6"/><rect x="1912.4" y="425.35" width="11.0" height="1.15" fill="#9cdcfe" opacity="0.7"/><rect x="1924.3" y="425.35" width="0.9" height="1.15" fill="#d4d4d4" opacity="0.5"/><rect x="1926.2" y="425.35" width="5.5" height="1.15" fill="#9cdcfe" opacity="0.7"/><rect x="1908.7" y="427.52" width="2.8" height="1.15" fill="#569cd6" opacity="0.6"/><rect x="1912.4" y="427.52" width="5.5" height="1.15" fill="#9cdcfe" opacity="0.7"/><rect x="1918.8" y="427.52" width="0.9" height="1.15" fill="#d4d4d4" opacity="0.5"/><rect x="1920.6" y="427.52" width="18.4" height="1.15" fill="#9cdcfe" opacity="0.7"/><rect x="1908.7" y="429.68" width="6.4" height="1.15" fill="#9cdcfe" opacity="0.7"/><rect x="1916.0" y="429.68" width="2.8" height="1.15" fill="#dcdcaa" opacity="0.7"/><rect x="1919.7" y="429.68" width="12.9" height="1.15" fill="#ce9178" opacity="0.65"/><rect x="1933.5" y="429.68" width="11.0" height="1.15" fill="#9cdcfe" opacity="0.7"/><rect x="1945.5" y="429.68" width="12.9" height="1.15" fill="#ce9178" opacity="0.65"/><rect x="1959.3" y="429.68" width="11.0" height="1.15" fill="#9cdcfe" opacity="0.7"/><rect x="1971.2" y="429.68" width="7.4" height="1.15" fill="#ce9178" opacity="0.65"/><rect x="1979.5" y="429.68" width="7.4" height="1.15" fill="#9cdcfe" opacity="0.7"/><rect x="1908.7" y="431.84" width="10.1" height="1.15" fill="#6a9955" opacity="0.55"/><rect x="1919.7" y="431.84" width="10.1" height="1.15" fill="#6a9955" opacity="0.55"/><rect x="1930.8" y="431.84" width="9.2" height="1.15" fill="#6a9955" opacity="0.55"/><rect x="1940.9" y="431.84" width="10.1" height="1.15" fill="#6a9955" opacity="0.55"/><rect x="1951.9" y="431.84" width="5.5" height="1.15" fill="#6a9955" opacity="0.55"/><rect x="1908.7" y="436.17" width="10.1" height="1.15" fill="#6a9955" opacity="0.55"/><rect x="1919.7" y="436.17" width="6.4" height="1.15" fill="#6a9955" opacity="0.55"/><rect x="1927.1" y="436.17" width="10.1" height="1.15" fill="#6a9955" opacity="0.55"/><rect x="1938.1" y="436.17" width="5.5" height="1.15" fill="#6a9955" opacity="0.55"/><rect x="1944.6" y="436.17" width="9.2" height="1.15" fill="#6a9955" opacity="0.55"/><rect x="1954.7" y="436.17" width="4.6" height="1.15" fill="#6a9955" opacity="0.55"/><rect x="1960.2" y="436.17" width="8.3" height="1.15" fill="#6a9955" opacity="0.55"/><rect x="1908.7" y="438.34" width="2.8" height="1.15" fill="#569cd6" opacity="0.6"/><rect x="1912.4" y="438.34" width="5.5" height="1.15" fill="#9cdcfe" opacity="0.7"/><rect x="1918.8" y="438.34" width="0.9" height="1.15" fill="#d4d4d4" opacity="0.5"/><rect x="1920.6" y="438.34" width="16.6" height="1.15" fill="#9cdcfe" opacity="0.7"/><rect x="1910.5" y="440.50" width="10.1" height="1.15" fill="#9cdcfe" opacity="0.7"/><rect x="1921.6" y="440.50" width="13.8" height="1.15" fill="#dcdcaa" opacity="0.7"/><rect x="1936.3" y="440.50" width="7.4" height="1.15" fill="#569cd6" opacity="0.6"/><rect x="1944.6" y="440.50" width="3.7" height="1.15" fill="#9cdcfe" opacity="0.6"/><rect x="1949.2" y="440.50" width="0.9" height="1.15" fill="#d4d4d4" opacity="0.5"/><rect x="1912.4" y="442.66" width="5.5" height="1.15" fill="#6a9955" opacity="0.55"/><rect x="1918.8" y="442.66" width="8.3" height="1.15" fill="#6a9955" opacity="0.55"/><rect x="1928.0" y="442.66" width="3.7" height="1.15" fill="#6a9955" opacity="0.55"/><rect x="1932.6" y="442.66" width="5.5" height="1.15" fill="#6a9955" opacity="0.55"/><rect x="1939.0" y="442.66" width="6.4" height="1.15" fill="#6a9955" opacity="0.55"/><rect x="1946.4" y="442.66" width="3.7" height="1.15" fill="#6a9955" opacity="0.55"/><rect x="1951.0" y="442.66" width="4.6" height="1.15" fill="#6a9955" opacity="0.55"/><rect x="1912.4" y="444.83" width="6.4" height="1.15" fill="#9cdcfe" opacity="0.7"/><rect x="1919.7" y="444.83" width="2.8" height="1.15" fill="#dcdcaa" opacity="0.7"/><rect x="1923.4" y="444.83" width="6.4" height="1.15" fill="#ce9178" opacity="0.65"/><rect x="1930.8" y="444.83" width="7.4" height="1.15" fill="#9cdcfe" opacity="0.7"/><rect x="1939.0" y="444.83" width="6.4" height="1.15" fill="#ce9178" opacity="0.65"/><rect x="1946.4" y="444.83" width="10.1" height="1.15" fill="#9cdcfe" opacity="0.7"/><rect x="1957.4" y="444.83" width="7.4" height="1.15" fill="#ce9178" opacity="0.65"/><rect x="1965.7" y="444.83" width="4.6" height="1.15" fill="#9cdcfe" opacity="0.7"/><rect x="1912.4" y="446.99" width="6.4" height="1.15" fill="#9cdcfe" opacity="0.7"/><rect x="1919.7" y="446.99" width="2.8" height="1.15" fill="#dcdcaa" opacity="0.7"/><rect x="1923.4" y="446.99" width="11.0" height="1.15" fill="#ce9178" opacity="0.65"/><rect x="1935.4" y="446.99" width="5.5" height="1.15" fill="#9cdcfe" opacity="0.7"/><rect x="1941.8" y="446.99" width="7.4" height="1.15" fill="#ce9178" opacity="0.65"/><rect x="1950.1" y="446.99" width="5.5" height="1.15" fill="#9cdcfe" opacity="0.7"/><rect x="1956.5" y="446.99" width="10.1" height="1.15" fill="#ce9178" opacity="0.65"/><rect x="1967.6" y="446.99" width="11.0" height="1.15" fill="#9cdcfe" opacity="0.7"/><rect x="1979.5" y="446.99" width="10.1" height="1.15" fill="#ce9178" opacity="0.65"/><rect x="1990.6" y="446.99" width="8.3" height="1.15" fill="#9cdcfe" opacity="0.7"/><rect x="1912.4" y="449.15" width="6.4" height="1.15" fill="#9cdcfe" opacity="0.7"/><rect x="1919.7" y="449.15" width="2.8" height="1.15" fill="#dcdcaa" opacity="0.7"/><rect x="1923.4" y="449.15" width="7.4" height="1.15" fill="#ce9178" opacity="0.65"/><rect x="1931.7" y="449.15" width="8.3" height="1.15" fill="#9cdcfe" opacity="0.7"/><rect x="1940.9" y="449.15" width="9.2" height="1.15" fill="#ce9178" opacity="0.65"/><rect x="1951.0" y="449.15" width="4.6" height="1.15" fill="#9cdcfe" opacity="0.7"/><rect x="1956.5" y="449.15" width="9.2" height="1.15" fill="#ce9178" opacity="0.65"/><rect x="1966.6" y="449.15" width="3.7" height="1.15" fill="#9cdcfe" opacity="0.7"/><rect x="1971.2" y="449.15" width="9.2" height="1.15" fill="#ce9178" opacity="0.65"/><rect x="1981.4" y="449.15" width="11.0" height="1.15" fill="#9cdcfe" opacity="0.7"/><rect x="1912.4" y="451.32" width="6.4" height="1.15" fill="#9cdcfe" opacity="0.7"/><rect x="1919.7" y="451.32" width="2.8" height="1.15" fill="#dcdcaa" opacity="0.7"/><rect x="1923.4" y="451.32" width="11.0" height="1.15" fill="#ce9178" opacity="0.65"/><rect x="1935.4" y="451.32" width="3.7" height="1.15" fill="#9cdcfe" opacity="0.7"/><rect x="1940.0" y="451.32" width="10.1" height="1.15" fill="#ce9178" opacity="0.65"/><rect x="1951.0" y="451.32" width="8.3" height="1.15" fill="#9cdcfe" opacity="0.7"/><rect x="1960.2" y="451.32" width="12.0" height="1.15" fill="#ce9178" opacity="0.65"/><rect x="1973.1" y="451.32" width="7.4" height="1.15" fill="#9cdcfe" opacity="0.7"/><rect x="1981.4" y="451.32" width="12.0" height="1.15" fill="#ce9178" opacity="0.65"/><rect x="1994.2" y="451.32" width="4.6" height="1.15" fill="#9cdcfe" opacity="0.7"/><rect x="1912.4" y="453.48" width="6.4" height="1.15" fill="#9cdcfe" opacity="0.7"/><rect x="1919.7" y="453.48" width="2.8" height="1.15" fill="#dcdcaa" opacity="0.7"/><rect x="1923.4" y="453.48" width="7.4" height="1.15" fill="#ce9178" opacity="0.65"/><rect x="1931.7" y="453.48" width="4.6" height="1.15" fill="#9cdcfe" opacity="0.7"/><rect x="1910.5" y="455.64" width="0.9" height="1.15" fill="#d4d4d4" opacity="0.5"/><rect x="1910.5" y="457.81" width="2.8" height="1.15" fill="#569cd6" opacity="0.6"/><rect x="1914.2" y="457.81" width="5.5" height="1.15" fill="#9cdcfe" opacity="0.7"/><rect x="1920.6" y="457.81" width="0.9" height="1.15" fill="#d4d4d4" opacity="0.5"/><rect x="1922.5" y="457.81" width="12.9" height="1.15" fill="#9cdcfe" opacity="0.7"/><rect x="1912.4" y="459.97" width="2.8" height="1.15" fill="#6a9955" opacity="0.55"/><rect x="1916.0" y="459.97" width="4.6" height="1.15" fill="#6a9955" opacity="0.55"/><rect x="1921.6" y="459.97" width="6.4" height="1.15" fill="#6a9955" opacity="0.55"/><rect x="1928.9" y="459.97" width="4.6" height="1.15" fill="#6a9955" opacity="0.55"/><rect x="1912.4" y="462.13" width="6.4" height="1.15" fill="#9cdcfe" opacity="0.7"/><rect x="1919.7" y="462.13" width="2.8" height="1.15" fill="#dcdcaa" opacity="0.7"/><rect x="1923.4" y="462.13" width="8.3" height="1.15" fill="#ce9178" opacity="0.65"/><rect x="1932.6" y="462.13" width="9.2" height="1.15" fill="#9cdcfe" opacity="0.7"/><rect x="1942.7" y="462.13" width="6.4" height="1.15" fill="#ce9178" opacity="0.65"/><rect x="1950.1" y="462.13" width="11.0" height="1.15" fill="#9cdcfe" opacity="0.7"/><rect x="1962.0" y="462.13" width="12.0" height="1.15" fill="#ce9178" opacity="0.65"/><rect x="1974.9" y="462.13" width="10.1" height="1.15" fill="#9cdcfe" opacity="0.7"/><rect x="1986.0" y="462.13" width="9.2" height="1.15" fill="#ce9178" opacity="0.65"/><rect x="1996.1" y="462.13" width="4.6" height="1.15" fill="#9cdcfe" opacity="0.7"/><rect x="1910.5" y="464.30" width="0.9" height="1.15" fill="#d4d4d4" opacity="0.5"/><rect x="1908.7" y="466.46" width="0.9" height="1.15" fill="#d4d4d4" opacity="0.5"/><rect x="1908.7" y="470.79" width="2.8" height="1.15" fill="#6a9955" opacity="0.55"/><rect x="1912.4" y="470.79" width="4.6" height="1.15" fill="#6a9955" opacity="0.55"/><rect x="1917.9" y="470.79" width="8.3" height="1.15" fill="#6a9955" opacity="0.55"/><rect x="1927.1" y="470.79" width="3.7" height="1.15" fill="#6a9955" opacity="0.55"/><rect x="1908.7" y="472.95" width="2.8" height="1.15" fill="#569cd6" opacity="0.6"/><rect x="1912.4" y="472.95" width="8.3" height="1.15" fill="#9cdcfe" opacity="0.7"/><rect x="1921.6" y="472.95" width="0.9" height="1.15" fill="#d4d4d4" opacity="0.5"/><rect x="1923.4" y="472.95" width="5.5" height="1.15" fill="#9cdcfe" opacity="0.7"/><rect x="1908.7" y="475.11" width="2.8" height="1.15" fill="#569cd6" opacity="0.6"/><rect x="1912.4" y="475.11" width="5.5" height="1.15" fill="#9cdcfe" opacity="0.7"/><rect x="1918.8" y="475.11" width="0.9" height="1.15" fill="#d4d4d4" opacity="0.5"/><rect x="1920.6" y="475.11" width="12.9" height="1.15" fill="#9cdcfe" opacity="0.7"/><rect x="1908.7" y="477.28" width="6.4" height="1.15" fill="#9cdcfe" opacity="0.7"/><rect x="1916.0" y="477.28" width="2.8" height="1.15" fill="#dcdcaa" opacity="0.7"/><rect x="1919.7" y="477.28" width="12.9" height="1.15" fill="#ce9178" opacity="0.65"/><rect x="1933.5" y="477.28" width="6.4" height="1.15" fill="#9cdcfe" opacity="0.7"/><rect x="1908.7" y="479.44" width="6.4" height="1.15" fill="#6a9955" opacity="0.55"/><rect x="1916.0" y="479.44" width="3.7" height="1.15" fill="#6a9955" opacity="0.55"/><rect x="1908.7" y="483.77" width="2.8" height="1.15" fill="#6a9955" opacity="0.55"/><rect x="1912.4" y="483.77" width="7.4" height="1.15" fill="#6a9955" opacity="0.55"/><rect x="1920.6" y="483.77" width="10.1" height="1.15" fill="#6a9955" opacity="0.55"/><rect x="1931.7" y="483.77" width="8.3" height="1.15" fill="#6a9955" opacity="0.55"/><rect x="1940.9" y="483.77" width="6.4" height="1.15" fill="#6a9955" opacity="0.55"/><rect x="1908.7" y="485.93" width="2.8" height="1.15" fill="#569cd6" opacity="0.6"/><rect x="1912.4" y="485.93" width="6.4" height="1.15" fill="#9cdcfe" opacity="0.7"/><rect x="1919.7" y="485.93" width="0.9" height="1.15" fill="#d4d4d4" opacity="0.5"/><rect x="1921.6" y="485.93" width="6.4" height="1.15" fill="#9cdcfe" opacity="0.7"/><rect x="1908.7" y="488.09" width="2.8" height="1.15" fill="#569cd6" opacity="0.6"/><rect x="1912.4" y="488.09" width="7.4" height="1.15" fill="#9cdcfe" opacity="0.7"/><rect x="1920.6" y="488.09" width="0.9" height="1.15" fill="#d4d4d4" opacity="0.5"/><rect x="1922.5" y="488.09" width="8.3" height="1.15" fill="#9cdcfe" opacity="0.7"/><rect x="1908.7" y="490.26" width="2.8" height="1.15" fill="#569cd6" opacity="0.6"/><rect x="1912.4" y="490.26" width="6.4" height="1.15" fill="#9cdcfe" opacity="0.7"/><rect x="1919.7" y="490.26" width="0.9" height="1.15" fill="#d4d4d4" opacity="0.5"/><rect x="1921.6" y="490.26" width="12.9" height="1.15" fill="#9cdcfe" opacity="0.7"/><rect x="1908.7" y="492.42" width="6.4" height="1.15" fill="#9cdcfe" opacity="0.7"/><rect x="1916.0" y="492.42" width="2.8" height="1.15" fill="#dcdcaa" opacity="0.7"/><rect x="1919.7" y="492.42" width="6.4" height="1.15" fill="#ce9178" opacity="0.65"/><rect x="1927.1" y="492.42" width="6.4" height="1.15" fill="#9cdcfe" opacity="0.7"/><rect x="1908.7" y="494.58" width="2.8" height="1.15" fill="#569cd6" opacity="0.6"/><rect x="1912.4" y="494.58" width="8.3" height="1.15" fill="#9cdcfe" opacity="0.7"/><rect x="1921.6" y="494.58" width="0.9" height="1.15" fill="#d4d4d4" opacity="0.5"/><rect x="1923.4" y="494.58" width="13.8" height="1.15" fill="#9cdcfe" opacity="0.7"/><rect x="1908.7" y="496.75" width="2.8" height="1.15" fill="#569cd6" opacity="0.6"/><rect x="1912.4" y="496.75" width="7.4" height="1.15" fill="#9cdcfe" opacity="0.7"/><rect x="1920.6" y="496.75" width="0.9" height="1.15" fill="#d4d4d4" opacity="0.5"/><rect x="1922.5" y="496.75" width="13.8" height="1.15" fill="#9cdcfe" opacity="0.7"/><rect x="1908.7" y="498.91" width="2.8" height="1.15" fill="#569cd6" opacity="0.6"/><rect x="1912.4" y="498.91" width="11.0" height="1.15" fill="#9cdcfe" opacity="0.7"/><rect x="1924.3" y="498.91" width="0.9" height="1.15" fill="#d4d4d4" opacity="0.5"/><rect x="1926.2" y="498.91" width="20.2" height="1.15" fill="#9cdcfe" opacity="0.7"/><rect x="1908.7" y="501.08" width="6.4" height="1.15" fill="#9cdcfe" opacity="0.7"/><rect x="1916.0" y="501.08" width="2.8" height="1.15" fill="#dcdcaa" opacity="0.7"/><rect x="1919.7" y="501.08" width="8.3" height="1.15" fill="#ce9178" opacity="0.65"/><rect x="1928.9" y="501.08" width="8.3" height="1.15" fill="#9cdcfe" opacity="0.7"/><rect x="1938.1" y="501.08" width="4.6" height="1.15" fill="#ce9178" opacity="0.65"/><rect x="1943.6" y="501.08" width="7.4" height="1.15" fill="#9cdcfe" opacity="0.7"/><rect x="1908.7" y="505.40" width="2.8" height="1.15" fill="#6a9955" opacity="0.55"/><rect x="1912.4" y="505.40" width="2.8" height="1.15" fill="#6a9955" opacity="0.55"/><rect x="1908.7" y="507.57" width="2.8" height="1.15" fill="#569cd6" opacity="0.6"/><rect x="1912.4" y="507.57" width="7.4" height="1.15" fill="#9cdcfe" opacity="0.7"/><rect x="1920.6" y="507.57" width="0.9" height="1.15" fill="#d4d4d4" opacity="0.5"/><rect x="1922.5" y="507.57" width="20.2" height="1.15" fill="#9cdcfe" opacity="0.7"/><rect x="1908.7" y="509.73" width="6.4" height="1.15" fill="#9cdcfe" opacity="0.7"/><rect x="1916.0" y="509.73" width="2.8" height="1.15" fill="#dcdcaa" opacity="0.7"/><rect x="1919.7" y="509.73" width="7.4" height="1.15" fill="#ce9178" opacity="0.65"/><rect x="1928.0" y="509.73" width="10.1" height="1.15" fill="#9cdcfe" opacity="0.7"/><rect x="1939.0" y="509.73" width="5.5" height="1.15" fill="#ce9178" opacity="0.65"/><rect x="1945.5" y="509.73" width="9.2" height="1.15" fill="#9cdcfe" opacity="0.7"/><rect x="1955.6" y="509.73" width="11.0" height="1.15" fill="#ce9178" opacity="0.65"/><rect x="1967.6" y="509.73" width="11.0" height="1.15" fill="#9cdcfe" opacity="0.7"/><rect x="1979.5" y="509.73" width="10.1" height="1.15" fill="#ce9178" opacity="0.65"/><rect x="1990.6" y="509.73" width="11.0" height="1.15" fill="#9cdcfe" opacity="0.7"/><rect x="1908.7" y="511.89" width="0.9" height="1.15" fill="#d4d4d4" opacity="0.5"/><rect x="1910.5" y="514.06" width="9.2" height="1.15" fill="#9cdcfe" opacity="0.7"/><rect x="1920.6" y="514.06" width="12.0" height="1.15" fill="#dcdcaa" opacity="0.7"/><rect x="1933.5" y="514.06" width="7.4" height="1.15" fill="#569cd6" opacity="0.6"/><rect x="1941.8" y="514.06" width="4.6" height="1.15" fill="#9cdcfe" opacity="0.6"/><rect x="1947.3" y="514.06" width="0.9" height="1.15" fill="#d4d4d4" opacity="0.5"/><rect x="1912.4" y="516.22" width="5.5" height="1.15" fill="#6a9955" opacity="0.55"/><rect x="1918.8" y="516.22" width="4.6" height="1.15" fill="#6a9955" opacity="0.55"/><rect x="1924.3" y="516.22" width="8.3" height="1.15" fill="#6a9955" opacity="0.55"/><rect x="1933.5" y="516.22" width="7.4" height="1.15" fill="#6a9955" opacity="0.55"/><rect x="1912.4" y="518.38" width="2.8" height="1.15" fill="#569cd6" opacity="0.6"/><rect x="1916.0" y="518.38" width="4.6" height="1.15" fill="#9cdcfe" opacity="0.7"/><rect x="1921.6" y="518.38" width="0.9" height="1.15" fill="#d4d4d4" opacity="0.5"/><rect x="1923.4" y="518.38" width="9.2" height="1.15" fill="#9cdcfe" opacity="0.7"/><rect x="1912.4" y="520.55" width="3.7" height="1.15" fill="#6a9955" opacity="0.55"/><rect x="1917.0" y="520.55" width="6.4" height="1.15" fill="#6a9955" opacity="0.55"/><rect x="1912.4" y="522.71" width="2.8" height="1.15" fill="#569cd6" opacity="0.6"/><rect x="1916.0" y="522.71" width="10.1" height="1.15" fill="#9cdcfe" opacity="0.7"/><rect x="1927.1" y="522.71" width="0.9" height="1.15" fill="#d4d4d4" opacity="0.5"/><rect x="1928.9" y="522.71" width="10.1" height="1.15" fill="#9cdcfe" opacity="0.7"/><rect x="1912.4" y="524.87" width="2.8" height="1.15" fill="#569cd6" opacity="0.6"/><rect x="1916.0" y="524.87" width="4.6" height="1.15" fill="#9cdcfe" opacity="0.7"/><rect x="1921.6" y="524.87" width="0.9" height="1.15" fill="#d4d4d4" opacity="0.5"/><rect x="1923.4" y="524.87" width="7.4" height="1.15" fill="#9cdcfe" opacity="0.7"/><rect x="1912.4" y="527.04" width="6.4" height="1.15" fill="#9cdcfe" opacity="0.7"/><rect x="1919.7" y="527.04" width="2.8" height="1.15" fill="#dcdcaa" opacity="0.7"/><rect x="1923.4" y="527.04" width="12.0" height="1.15" fill="#ce9178" opacity="0.65"/><rect x="1936.3" y="527.04" width="7.4" height="1.15" fill="#9cdcfe" opacity="0.7"/><rect x="1944.6" y="527.04" width="12.9" height="1.15" fill="#ce9178" opacity="0.65"/><rect x="1958.4" y="527.04" width="6.4" height="1.15" fill="#9cdcfe" opacity="0.7"/><rect x="1965.7" y="527.04" width="8.3" height="1.15" fill="#ce9178" opacity="0.65"/><rect x="1974.9" y="527.04" width="3.7" height="1.15" fill="#9cdcfe" opacity="0.7"/><rect x="1979.5" y="527.04" width="11.0" height="1.15" fill="#ce9178" opacity="0.65"/><rect x="1991.5" y="527.04" width="5.5" height="1.15" fill="#9cdcfe" opacity="0.7"/><rect x="1912.4" y="529.20" width="5.5" height="1.15" fill="#c586c0" opacity="0.6"/><rect x="1918.8" y="529.20" width="7.4" height="1.15" fill="#569cd6" opacity="0.6"/><rect x="1927.1" y="529.20" width="4.6" height="1.15" fill="#9cdcfe" opacity="0.6"/><rect x="1910.5" y="531.36" width="0.9" height="1.15" fill="#d4d4d4" opacity="0.5"/><rect x="1908.7" y="533.53" width="0.9" height="1.15" fill="#d4d4d4" opacity="0.5"/><rect x="1906.8" y="537.85" width="0.9" height="1.15" fill="#d4d4d4" opacity="0.5"/><rect x="1905.0" y="540.02" width="0.9" height="1.15" fill="#d4d4d4" opacity="0.5"/><rect x="1905.0" y="544.34" width="9.2" height="1.15" fill="#9cdcfe" opacity="0.7"/><rect x="1915.1" y="544.34" width="15.6" height="1.15" fill="#dcdcaa" opacity="0.7"/><rect x="1931.7" y="544.34" width="7.4" height="1.15" fill="#569cd6" opacity="0.6"/><rect x="1940.0" y="544.34" width="3.7" height="1.15" fill="#9cdcfe" opacity="0.6"/><rect x="1944.6" y="544.34" width="0.9" height="1.15" fill="#d4d4d4" opacity="0.5"/></svg>
<div class="b" style="left:1902.00px;top:410.60px;width:1.60px;height:128.60px;background:#2ea043;opacity:.8"></div>
<div class="b" style="left:1902.00px;top:346.60px;width:1.60px;height:3.00px;background:#0078d4;opacity:.8"></div>
<div class="b" style="left:1902.00px;top:373.60px;width:1.60px;height:3.00px;background:#0078d4;opacity:.8"></div>
<div class="b" style="left:1902.00px;top:385.20px;width:1.60px;height:3.00px;background:#0078d4;opacity:.8"></div>
<div class="b" style="left:1905.00px;top:524.20px;width:127.00px;height:2.20px;background:#3a6ea5;"></div>
<div class="b" style="left:2031.60px;top:101.00px;width:1.00px;height:452.00px;background:#252525;"></div>
<div class="b" style="left:2033.20px;top:102.40px;width:5.00px;height:5.40px;background:#0e70c0;"></div>
<div class="b" style="left:2033.20px;top:451.60px;width:5.00px;height:7.00px;background:#0e70c0;"></div>
<div class="b" style="left:2033.20px;top:462.60px;width:5.00px;height:11.60px;background:#0e70c0;"></div>
<div class="b" style="left:2033.20px;top:480.00px;width:5.00px;height:50.20px;background:#2ea043;opacity:.85"></div>
<div class="b" style="left:2033.20px;top:498.00px;width:5.00px;height:4.00px;background:#3c8fc0;opacity:.8"></div>
<div class="b" style="left:2032.00px;top:524.00px;width:16.00px;height:2.40px;background:#a0a0a0;"></div>
<!-- panel -->
<div class="b" style="left:620.60px;top:553.40px;width:1427.40px;height:574.80px;background:#181818;"></div>
<div class="b" style="left:620.60px;top:553.00px;width:1427.40px;height:1.00px;background:#2b2b2b;"></div>
<div class="t cjk" style="left:641.30px;top:563.80px;font-size:12px;line-height:18.0px;color:#9d9d9d;">问题</div>
<div class="t cjk" style="left:692.80px;top:563.80px;font-size:12px;line-height:18.0px;color:#9d9d9d;">输出</div>
<div class="t cjk" style="left:743.20px;top:563.80px;font-size:12px;line-height:18.0px;color:#9d9d9d;">调试控制台</div>
<div class="t cjk" style="left:829.00px;top:563.80px;font-size:12px;line-height:18.0px;color:#e7e7e7;">终端</div>
<div class="b" style="left:827.00px;top:586.40px;width:28.40px;height:1.10px;background:#0078d4;"></div>
<svg class="ic" style="left:1915.08px;top:563.88px;width:17.45px;height:17.45px;" viewBox="0 0 16 16"><path fill="#cccccc" d="M14.03 1.01H2.99L2.03 1.97V13.01L2.99 13.97H14.03L14.99 13.01V1.97ZM8 13.01H2.99V1.97H8ZM14.03 13.01H9.01V1.97H14.03Z"/></svg>
<svg class="ic" style="left:1934.80px;top:567.00px;width:12.00px;height:12.00px;" viewBox="0 0 16 16"><path fill="#cccccc" d="M8 10.08 12.32 5.71 12.96 6.35 8.27 10.99H7.68L2.99 6.35L3.63 5.71Z"/></svg>
<svg class="ic" style="left:1957.28px;top:563.88px;width:17.45px;height:17.45px;" viewBox="0 0 16 16"><path fill="#cccccc" d="M4 8Q4 8.43 3.71 8.72Q3.41 9.01 2.99 9.01Q2.56 9.01 2.29 8.72Q2.03 8.43 2.03 8Q2.03 7.57 2.29 7.28Q2.56 6.99 2.99 6.99Q3.41 6.99 3.71 7.28Q4 7.57 4 8ZM9.01 8Q9.01 8.43 8.72 8.72Q8.43 9.01 8 9.01Q7.57 9.01 7.28 8.72Q6.99 8.43 6.99 8Q6.99 7.57 7.28 7.28Q7.57 6.99 8 6.99Q8.43 6.99 8.72 7.28Q9.01 7.57 9.01 8ZM14.03 8Q14.03 8.43 13.73 8.72Q13.44 9.01 13.01 9.01Q12.59 9.01 12.29 8.72Q12 8.43 12 8Q12 7.57 12.29 7.28Q12.59 6.99 13.01 6.99Q13.44 6.99 13.73 7.28Q14.03 7.57 14.03 8Z"/></svg>
<svg class="ic" style="left:1985.68px;top:563.88px;width:17.45px;height:17.45px;" viewBox="0 0 16 16"><path fill="#cccccc" d="M8 5.92 3.68 10.29 3.04 9.65 7.73 5.01H8.32L13.01 9.65L12.37 10.29Z"/></svg>
<svg class="ic" style="left:2013.88px;top:563.88px;width:17.45px;height:17.45px;" viewBox="0 0 16 16"><path fill="#cccccc" d="M8 8.69 11.63 12.37 12.37 11.63 8.69 8 12.37 4.37 11.63 3.63 8 7.31 4.37 3.63 3.63 4.37 7.31 8 3.63 11.63 4.37 12.37Z"/></svg>
<div class="tl" style="top:606.20px">m1.e.i(): str1Stripped=Zi8KGA==, str2Stripped=AE0+eZ9v58g= --&gt;&gt; fb4a</div>
<div class="tl" style="top:621.47px">m1.e.i(): str1Stripped=n+IwzFs/Og7X4DzE, str2Stripped=+YNTqTlQVWU= --&gt;&gt; facebook.com</div>
<div class="tl" style="top:636.75px">m1.e.i(): str1Stripped=6lmEOrkL, str2Stripped=iz3uT8p/p/4= --&gt;&gt; adjust</div>
<div class="tl" style="top:652.02px">m1.e.i(): str1Stripped=YWcBkgUT1ntlZQ==, str2Stripped=AANr53ZniQk= --&gt;&gt; adjust_ref</div>
<div class="tl" style="top:667.29px">m1.e.i(): str1Stripped=u9q6nVAL9A==, str2Stripped=1Kjd/D5il+I= --&gt;&gt; organic</div>
<div class="tl" style="top:682.57px">m1.e.i(): str1Stripped=pfWjrvurbQ==, str2Stripped=yofEz5XCDjU= --&gt;&gt; organic</div>
<div class="tl" style="top:697.84px">m1.e.i(): str1Stripped=GKcOvG5nbr4=, str2Stripped=We5Y7DwNBYM= --&gt;&gt; AIVPRjk=</div>
<div class="tl" style="top:713.11px">m1.e.i(): str1Stripped=urwhs9CWsta5unHxh9K7n7ehIfKJ1bacuqw498eG5tY=, str2Stripped=3M9Jw7/gg+8= --&gt;&gt; fshpov19eu82828pknh1655sfcq4xfe9</div>
<div class="tl" style="top:728.38px">m1.e.i(): str1Stripped=gBPhX4E=, str2Stripped=1UencrnGACo= --&gt;&gt; UTF-8</div>
<div class="tl" style="top:743.66px">m1.e.i(): str1Stripped=C0YO33gie94ALSCkCnQj2g5kDJVwaiqx, str2Stripped=WhVY8DINF4w= --&gt;&gt; QSV/J/lRZ8xT8y4VTqTeBg==</div>
<div class="tl" style="top:758.93px">m1.e.i(): str1Stripped=urwhs9CWsta5unHxh9K7n7ehIfKJ1bacuqw498eG5tY=, str2Stripped=3M9Jw7/gg+8= --&gt;&gt; fshpov19eu82828pknh1655sfcq4xfe9</div>
<div class="tl" style="top:774.20px">m1.e.i(): str1Stripped=gBPhX4E=, str2Stripped=1UencrnGACo= --&gt;&gt; UTF-8</div>
<div class="tl" style="top:789.48px">m1.e.i(): str1Stripped=lOLv8t576N2Tkc7T73ezi5Xc6KjjOL/Y2JHZxsEWyNau++vpzTm7hw==, str2Stripped=96i6h4hOhro= --&gt;&gt; cJUuV5ngd9tTg951btR/kv9b/9cAIXNlYSQnEw==</div>
<div class="tl" style="top:804.75px">m1.e.i(): str1Stripped=urwhs9CWsta5unHxh9K7n7ehIfKJ1bacuqw498eG5tY=, str2Stripped=3M9Jw7/gg+8= --&gt;&gt; fshpov19eu82828pknh1655sfcq4xfe9</div>
<div class="tl" style="top:820.02px">m1.e.i(): str1Stripped=gBPhX4E=, str2Stripped=1UencrnGACo= --&gt;&gt; UTF-8</div>
<div class="tl" style="top:835.30px">m1.e.i(): str1Stripped=qrWDW7z7XA==, str2Stripped=ydrtL9mDKJI= --&gt;&gt; context</div>
<div class="tl" style="top:850.57px">m1.e.i(): str1Stripped=0N9I, str2Stripped=s7M7XUPzvSY= --&gt;&gt; cls</div>
<div class="tl" style="top:865.84px">m1.e.i(): str1Stripped=e5sBx5B3wHN5kg==, str2Stripped=HPRuoPwSnwE= --&gt;&gt; google_ref</div>
<div class="tl" style="top:881.11px">m1.e.i(): str1Stripped=Zi8KGA==, str2Stripped=AE0+eZ9v58g= --&gt;&gt; fb4a</div>
<div class="tl" style="top:896.39px">m1.e.i(): str1Stripped=n+IwzFs/Og7X4DzE, str2Stripped=+YNTqTlQVWU= --&gt;&gt; facebook.com</div>
<div class="tl" style="top:911.66px">m1.e.i(): str1Stripped=6lmEOrkL, str2Stripped=iz3uT8p/p/4= --&gt;&gt; adjust</div>
<div class="tl" style="top:926.93px">m1.e.i(): str1Stripped=YWcBkgUT1ntlZQ==, str2Stripped=AANr53ZniQk= --&gt;&gt; adjust_ref</div>
<div class="tl" style="top:942.21px">m1.e.i(): str1Stripped=u9q6nVAL9A==, str2Stripped=1Kjd/D5il+I= --&gt;&gt; organic</div>
<div class="tl" style="top:957.48px">m1.e.i(): str1Stripped=pfWjrvurbQ==, str2Stripped=yofEz5XCDjU= --&gt;&gt; organic</div>
<div class="tl" style="top:972.75px">m1.e.i(): str1Stripped=GKcOvG5nbr4=, str2Stripped=We5Y7DwNBYM= --&gt;&gt; AIVPRjk=</div>
<div class="tl" style="top:988.03px">m1.e.i(): str1Stripped=urwhs9CWsta5unHxh9K7n7ehIfKJ1bacuqw498eG5tY=, str2Stripped=3M9Jw7/gg+8= --&gt;&gt; fshpov19eu82828pknh1655sfcq4xfe9</div>
<div class="tl" style="top:1003.30px">m1.e.i(): str1Stripped=gBPhX4E=, str2Stripped=1UencrnGACo= --&gt;&gt; UTF-8</div>
<div class="tl" style="top:1018.57px">m1.e.i(): str1Stripped=C0YO33gie94ALSCkCnQj2g5kDJVwaiqx, str2Stripped=WhVY8DINF4w= --&gt;&gt; QSV/J/lRZ8xT8y4VTqTeBg==</div>
<div class="tl" style="top:1033.84px">m1.e.i(): str1Stripped=urwhs9CWsta5unHxh9K7n7ehIfKJ1bacuqw498eG5tY=, str2Stripped=3M9Jw7/gg+8= --&gt;&gt; fshpov19eu82828pknh1655sfcq4xfe9</div>
<div class="tl" style="top:1049.12px">m1.e.i(): str1Stripped=gBPhX4E=, str2Stripped=1UencrnGACo= --&gt;&gt; UTF-8</div>
<div class="tl" style="top:1064.39px">m1.e.i(): str1Stripped=lOLv8t576N2Tkc7T73ezi5Xc6KjjOL/Y2JHZxsEWyNau++vpzTm7hw==, str2Stripped=96i6h4hOhro= --&gt;&gt; cJUuV5ngd9tTg951btR/kv9b/9cAIXNlYSQnEw==</div>
<div class="tl" style="top:1079.66px">m1.e.i(): str1Stripped=urwhs9CWsta5unHxh9K7n7ehIfKJ1bacuqw498eG5tY=, str2Stripped=3M9Jw7/gg+8= --&gt;&gt; fshpov19eu82828pknh1655sfcq4xfe9</div>
<div class="tl" style="top:1094.94px">m1.e.i(): str1Stripped=gBPhX4E=, str2Stripped=1UencrnGACo= --&gt;&gt; UTF-8</div>
<div class="b" style="left:642.00px;top:1110.30px;width:7.70px;height:15.30px;background:#cccccc;"></div>
<div class="b" style="left:1851.60px;top:1106.00px;width:12.00px;height:22.00px;background:#2b2b2b;"></div>
<div class="b" style="left:1863.60px;top:590.40px;width:1.00px;height:537.80px;background:#2b2b2b;"></div>
<div class="b" style="left:1864.60px;top:615.00px;width:183.40px;height:24.00px;background:#37373d;"></div>
<div class="b" style="left:1864.60px;top:615.00px;width:2.00px;height:24.00px;background:#0078d4;"></div>
<svg class="ic" style="left:1875.27px;top:593.67px;width:17.45px;height:17.45px" viewBox="0 0 16 16"><rect x="1.5" y="2.5" width="13" height="11" rx="1.4" fill="none" stroke="#cccccc" stroke-width="1"/><path fill="none" stroke="#cccccc" stroke-width="1" d="M6.2 5.2 9.2 8 6.2 10.8"/></svg>
<div class="t " style="left:1896.80px;top:593.26px;font-size:14.18px;line-height:21.27px;color:#cccccc;letter-spacing:0.714px;">zsh</div>
<div class="t " style="left:1926.40px;top:594.35px;font-size:13.0px;line-height:19.5px;color:#9a9a9a;letter-spacing:0.524px;">arm64-v8a</div>
<svg class="ic" style="left:1875.27px;top:617.87px;width:17.45px;height:17.45px" viewBox="0 0 16 16"><rect x="1.5" y="2.5" width="13" height="11" rx="1.4" fill="none" stroke="#cccccc" stroke-width="1"/><path fill="none" stroke="#cccccc" stroke-width="1" d="M6.2 5.2 9.2 8 6.2 10.8"/></svg>
<div class="t " style="left:1896.80px;top:617.47px;font-size:14.18px;line-height:21.27px;color:#cccccc;letter-spacing:0.714px;">zsh</div>
<div class="t " style="left:1926.40px;top:618.55px;font-size:13.0px;line-height:19.5px;color:#9a9a9a;letter-spacing:0.21px;">frida</div>
<!-- status bar -->
<div class="b" style="left:0.00px;top:1128.20px;width:2048.00px;height:23.80px;background:#181818;"></div>
<div class="b" style="left:0.00px;top:1128.00px;width:2048.00px;height:1.00px;background:#2b2b2b;"></div>
<div class="b" style="left:0.00px;top:1128.20px;width:37.40px;height:23.80px;background:#0078d4;"></div>
<svg class="ic" style="left:10.08px;top:1131.28px;width:17.45px;height:17.45px;" viewBox="0 0 16 16"><path fill="#ffffff" d="M12.91 9.55 8.91 5.6 12.91 1.6 12.27 1.01 8 5.28V5.92L12.27 10.19ZM2.99 5.6 7.09 9.71 2.99 13.76 3.63 14.4 8 9.97V9.39L3.63 5.01Z"/></svg>
<svg class="ic" style="left:43.75px;top:1132.25px;width:15.30px;height:15.30px;" viewBox="0 0 16 16"><path fill="#cccccc" d="M14.03 5.49Q14.03 4.8 13.65 4.19Q13.28 3.57 12.64 3.25Q12 2.93 11.31 2.99Q10.61 3.04 10.03 3.47Q9.44 3.89 9.2 4.56Q8.96 5.23 9.07 5.92Q9.17 6.61 9.65 7.12Q10.13 7.63 10.83 7.84Q10.56 8.37 10.08 8.67Q9.6 8.96 9.01 8.96H7.04Q5.87 8.96 5.01 9.76V4.91Q5.97 4.75 6.53 3.97Q7.09 3.2 7.01 2.24Q6.93 1.28 6.21 0.64Q5.49 0 4.53 0Q3.57 0 2.85 0.64Q2.13 1.28 2.05 2.24Q1.97 3.2 2.53 3.97Q3.09 4.75 4.05 4.91V10.99Q3.09 11.2 2.51 11.95Q1.92 12.69 2 13.65Q2.08 14.61 2.75 15.28Q3.41 15.95 4.37 16Q5.33 16.05 6.08 15.47Q6.83 14.88 6.99 13.92Q7.15 12.96 6.67 12.16Q6.19 11.36 5.23 11.09Q5.49 10.56 5.97 10.27Q6.45 9.97 7.04 9.97H9.01Q9.97 9.97 10.75 9.41Q11.52 8.85 11.84 7.95Q12.75 7.84 13.39 7.12Q14.03 6.4 14.03 5.49ZM3.04 2.51Q3.04 1.87 3.47 1.44Q3.89 1.01 4.53 1.01Q5.17 1.01 5.6 1.44Q6.03 1.87 6.03 2.48Q6.03 3.09 5.6 3.55Q5.17 4 4.53 4Q3.89 4 3.47 3.55Q3.04 3.09 3.04 2.51ZM6.03 13.44Q6.03 14.08 5.6 14.51Q5.17 14.93 4.53 14.93Q3.89 14.93 3.47 14.51Q3.04 14.08 3.04 13.47Q3.04 12.85 3.47 12.4Q3.89 11.95 4.53 11.95Q5.17 11.95 5.6 12.4Q6.03 12.85 6.03 13.44ZM11.52 6.99Q10.88 6.99 10.45 6.53Q10.03 6.08 10.03 5.47Q10.03 4.85 10.45 4.43Q10.88 4 11.49 4Q12.11 4 12.56 4.43Q13.01 4.85 13.01 5.47Q13.01 6.08 12.56 6.53Q12.11 6.99 11.52 6.99Z"/></svg>
<div class="t " style="left:63.20px;top:1130.09px;font-size:13.09px;line-height:19.63px;color:#cccccc;">main*</div>
<svg class="ic" style="left:105.55px;top:1132.25px;width:15.30px;height:15.30px;" viewBox="0 0 16 16"><path fill="#cccccc" d="M2.03 8.27 0.8 9.49 0 8.75 2.08 6.67H2.83L4.96 8.8L4.16 9.55L2.99 8.37Q3.15 10.03 4.24 11.28Q5.33 12.53 6.96 12.88Q8.59 13.23 10.11 12.53Q11.63 11.84 12.43 10.35L13.23 10.93Q12.21 12.69 10.37 13.49Q8.53 14.29 6.59 13.84Q4.64 13.39 3.36 11.84Q2.08 10.29 2.03 8.27ZM13.01 7.79 11.79 6.56 10.99 7.31 13.07 9.44H13.87L15.95 7.36L15.2 6.61L13.97 7.79Q13.92 5.81 12.69 4.27Q11.47 2.72 9.55 2.21Q7.63 1.71 5.79 2.43Q3.95 3.15 2.88 4.85L3.68 5.44Q4.53 4 6.08 3.36Q7.63 2.72 9.23 3.15Q10.83 3.57 11.87 4.85Q12.91 6.13 13.01 7.79Z"/></svg>
<svg class="ic" style="left:135.55px;top:1132.25px;width:15.30px;height:15.30px;" viewBox="0 0 16 16"><path fill="#cccccc" d="M8.59 1.01Q9.76 1.07 10.85 1.6Q11.95 2.13 12.8 2.99Q14.83 5.17 14.83 8.11Q14.83 10.4 13.23 12.48Q12.43 13.44 11.41 14.05Q10.4 14.67 9.23 14.88Q6.67 15.36 4.59 14.19Q3.52 13.6 2.72 12.69Q1.92 11.79 1.49 10.67Q1.07 9.55 0.99 8.32Q0.91 7.09 1.28 5.97Q2.08 3.52 4.11 2.19Q5.07 1.55 6.21 1.23Q7.36 0.91 8.59 1.01ZM9.12 13.92Q11.15 13.44 12.48 11.79Q13.81 9.97 13.71 8Q13.71 6.77 13.25 5.65Q12.8 4.53 12 3.68Q10.45 2.13 8.43 1.97Q7.41 1.92 6.4 2.16Q5.39 2.4 4.59 2.99Q2.88 4.27 2.27 6.35Q1.65 8.43 2.53 10.35Q3.41 12.27 5.23 13.28Q6.08 13.81 7.09 13.97Q8.11 14.13 9.12 13.92ZM7.89 7.52 10.29 5.01 10.99 5.71 8.59 8.21 10.99 10.72 10.29 11.41 7.89 8.91 5.49 11.41 4.8 10.72 7.2 8.21 4.8 5.71 5.49 5.01Z"/></svg>
<div class="t " style="left:155.20px;top:1130.09px;font-size:13.09px;line-height:19.63px;color:#cccccc;">0</div>
<svg class="ic" style="left:166.55px;top:1132.25px;width:15.30px;height:15.30px;" viewBox="0 0 16 16"><path fill="#cccccc" d="M7.57 1.01H8.43L14.99 13.28L14.56 13.97H1.44L1.01 13.28ZM8 2.29 2.29 13.01H13.71ZM8.64 12V10.99H7.36V12ZM7.36 9.97V5.97H8.64V9.97Z"/></svg>
<div class="t " style="left:185.80px;top:1130.09px;font-size:13.09px;line-height:19.63px;color:#cccccc;">0</div>
<div class="t sb" style="left:1559.40px;top:1130.09px;font-size:13.09px;line-height:19.63px;color:#cccccc;">行 550，列 1 (已选择123)</div>
<div class="t sb" style="left:1734.60px;top:1130.09px;font-size:13.09px;line-height:19.63px;color:#cccccc;">空格: 2</div>
<div class="t " style="left:1793.00px;top:1130.09px;font-size:13.09px;line-height:19.63px;color:#cccccc;">UTF-8</div>
<div class="t " style="left:1850.40px;top:1130.09px;font-size:13.09px;line-height:19.63px;color:#cccccc;">LF</div>
<div class="t " style="left:1882.60px;top:1129.68px;font-size:13.09px;line-height:19.63px;color:#cccccc;letter-spacing:2.2px;">{}</div>
<div class="t " style="left:1903.20px;top:1130.09px;font-size:13.09px;line-height:19.63px;color:#cccccc;">JavaScript</div>
<svg class="ic" style="left:1983.35px;top:1132.25px;width:15.30px;height:15.30px;" viewBox="0 0 16 16"><path fill="#cccccc" d="M4.48 1.01 4 1.49V3.04L4.48 2.99L5.01 3.04V1.97H14.03V6.99H12.27L10.99 8.27V6.99H8.96L9.01 7.52L8.96 8H10.03V9.49L10.88 9.87L12.69 8H14.51L14.99 7.52V1.49L14.51 1.01ZM6.4 10.45Q7.15 9.97 7.57 9.2Q8 8.43 8 7.49Q8 6.56 7.52 5.76Q7.04 4.96 6.24 4.48Q5.44 4 4.51 4Q3.57 4 2.75 4.48Q1.92 4.96 1.47 5.76Q1.01 6.56 1.01 7.49Q1.01 8.43 1.44 9.2Q1.87 9.97 2.56 10.45Q1.87 10.77 1.28 11.36Q0.69 11.95 0.32 12.8Q0.11 13.39 0.05 14.03L0 14.99H1.01V14.45Q1.01 13.76 1.28 13.15Q1.55 12.53 2.03 12.03Q2.51 11.52 3.15 11.25Q3.79 10.99 4.48 10.99H4.53Q5.23 10.99 5.87 11.25Q6.51 11.52 6.99 12.03Q7.47 12.53 7.73 13.15Q8 13.76 8 14.45V14.99H9.01L8.96 13.97Q8.91 13.39 8.64 12.8Q8.32 11.95 7.73 11.36Q7.15 10.77 6.4 10.45ZM4.48 9.97Q3.47 9.97 2.75 9.25Q2.03 8.53 2.03 7.49Q2.03 6.45 2.75 5.73Q3.47 5.01 4.51 5.01Q5.55 5.01 6.27 5.73Q6.99 6.45 6.99 7.49Q6.99 8.53 6.27 9.25Q5.55 9.97 4.48 9.97Z"/></svg>
<svg class="ic" style="left:2016.15px;top:1132.25px;width:15.30px;height:15.30px;" viewBox="0 0 16 16"><path fill="#cccccc" d="M13.39 10.56Q13.01 9.44 13.01 8.21V6.19Q13.01 5.23 12.69 4.35Q12.37 3.47 11.73 2.75Q11.09 2.03 10.27 1.57Q9.44 1.12 8.48 1.01Q7.41 0.91 6.4 1.25Q5.39 1.6 4.61 2.32Q3.84 3.04 3.41 4Q2.99 4.96 2.99 6.03V8.21Q2.99 9.44 2.61 10.56L2.03 12.32L2.45 13.01H5.97Q5.97 13.81 6.56 14.4Q7.15 14.99 7.97 14.99Q8.8 14.99 9.39 14.4Q9.97 13.81 9.97 13.01H13.49L13.97 12.32ZM8.69 13.71Q8.37 14.03 7.97 14.03Q7.57 14.03 7.28 13.73Q6.99 13.44 6.99 13.01H8.96Q9.01 13.44 8.69 13.71ZM3.15 12 3.52 10.88Q4 9.6 4 8.21V6.03Q4 5.17 4.35 4.37Q4.69 3.57 5.31 3.01Q5.92 2.45 6.75 2.19Q7.57 1.92 8.37 2.03Q9.97 2.24 10.99 3.41Q11.47 4 11.73 4.72Q12 5.44 12 6.19V8.21Q12 9.6 12.43 10.93L12.8 12Z"/></svg>
<div class="b" style="left:0.00px;top:92.00px;width:1.00px;height:1036.00px;background:#2c2c2c;"></div>
</div>
</body></html>
